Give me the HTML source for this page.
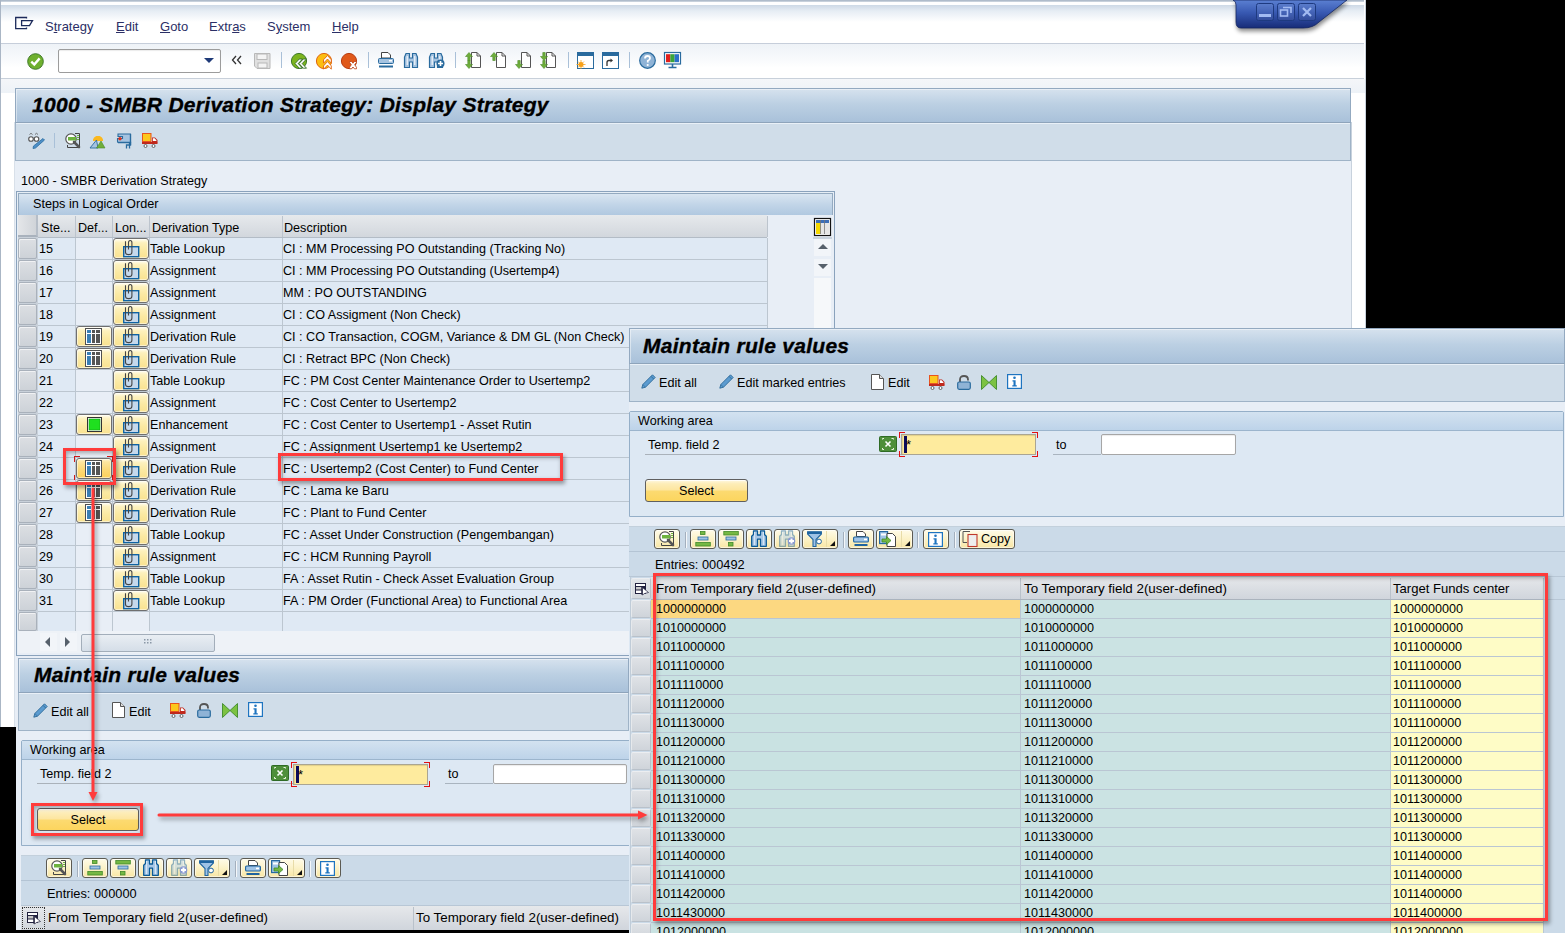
<!DOCTYPE html><html><head><meta charset="utf-8"><title>SAP</title><style>
*{box-sizing:border-box;margin:0;padding:0}
html,body{width:1565px;height:933px;overflow:hidden;background:#000}
body{position:relative;font-family:"Liberation Sans",sans-serif;font-size:12.6px;color:#000}
.a{position:absolute}
.t{position:absolute;white-space:nowrap;line-height:1}
svg{position:absolute;overflow:visible}
.ttl{font-weight:bold;font-style:italic;font-size:21px;letter-spacing:0.28px;-webkit-text-stroke:0.35px #000}
.sep{position:absolute;width:1px;background:#a9c0d8}
.ybtn{position:absolute;border:1px solid #a8996a;border-radius:2px;background:linear-gradient(#fdf4c4,#f9e08e 60%,#f5d36a)}
.rh{position:absolute;background:linear-gradient(90deg,#dfe2e6,#cfd4da);border-right:1px solid #aeb6c0;border-bottom:1px solid #aeb6c0}
.red{position:absolute;border:3px solid #ff3b3b;box-shadow:2px 3px 4px rgba(0,0,0,.35), inset 1px 2px 4px rgba(0,0,0,.3)}
</style></head><body>
<div class="a" style="left:0;top:0;width:1366px;height:727px;background:#fff;border-left:1px solid #aab6c5;border-right:1px solid #c9d2dc"></div>
<div class="a" style="left:14px;top:122px;width:1338px;height:605px;background:#e8eef6;border-left:1px solid #d8e0e9;border-right:1px solid #c8d2dd"></div>
<div class="a" style="left:1px;top:0;width:1363px;height:44px;background:linear-gradient(#afbccb 0,#afbccb 1px,#dfe5ec 2px,#fff 2px,#fff 5px,#cdd9e6 5px,#e6edf4 11px,#fff 22px);border-bottom:1px solid #c6ceda"></div>
<svg style="left:14px;top:16px" width="20" height="14" viewBox="0 0 20 14"><path d="M12.5 2.6V1.5H1.7V12.6H12.5V11.5" fill="none" stroke="#1c2a5a" stroke-width="1.3"/><path d="M7.6 4.6H18.5L15.5 9.6H7.6Z" fill="none" stroke="#1c2a5a" stroke-width="1.3"/></svg>
<div class="t" style="left:45px;top:20px;font-size:13px;color:#2b2f66">S<u>t</u>rategy</div>
<div class="t" style="left:116px;top:20px;font-size:13px;color:#2b2f66"><u>E</u>dit</div>
<div class="t" style="left:160px;top:20px;font-size:13px;color:#2b2f66"><u>G</u>oto</div>
<div class="t" style="left:209px;top:20px;font-size:13px;color:#2b2f66">Extr<u>a</u>s</div>
<div class="t" style="left:267px;top:20px;font-size:13px;color:#2b2f66">S<u>y</u>stem</div>
<div class="t" style="left:332px;top:20px;font-size:13px;color:#2b2f66"><u>H</u>elp</div>
<svg style="left:1233px;top:0;filter:drop-shadow(1px 3px 2px rgba(0,0,0,.45))" width="120" height="34" viewBox="0 0 120 34"><defs><linearGradient id="wg" x1="0" y1="0" x2="0" y2="1"><stop offset="0" stop-color="#5b80d2"/><stop offset="0.45" stop-color="#3859b2"/><stop offset="1" stop-color="#172c78"/></linearGradient></defs><path d="M0 0H114L86 22Q80 28 70 28H8Q3 28 3 22V5Q3 1 0 0Z" fill="url(#wg)" stroke="#142660" stroke-width="0.8"/><rect x="23.5" y="3.5" width="17" height="17" rx="2" fill="rgba(255,255,255,.06)" stroke="#1e3a80"/><rect x="26" y="14" width="12" height="3" fill="#a3bbf2"/><rect x="44.5" y="3.5" width="17" height="17" rx="2" fill="rgba(255,255,255,.06)" stroke="#1e3a80"/><rect x="47.5" y="10" width="7" height="6" fill="none" stroke="#a3bbf2" stroke-width="1.6"/><path d="M50 7.5H58V13" fill="none" stroke="#a3bbf2" stroke-width="1.6"/><rect x="65.5" y="3.5" width="17" height="17" rx="2" fill="rgba(255,255,255,.06)" stroke="#1e3a80"/><path d="M70 8L78 16M78 8L70 16" stroke="#a3bbf2" stroke-width="2.2"/></svg>
<div class="a" style="left:1px;top:44px;width:1363px;height:35px;background:linear-gradient(#eef2f7,#f8fafc 45%,#fff 70%);border-bottom:1px solid #c8d0da"></div>
<div class="a" style="left:1px;top:79px;width:1363px;height:10px;background:linear-gradient(#f6f8fb,#eaf0f6)"></div>
<div class="a" style="left:1px;top:79px;width:1364px;height:14px;background:linear-gradient(#f4f6f9,#edf2f7)"></div>
<svg style="left:26.5px;top:52.5px" width="17" height="17" viewBox="0 0 17 17"><circle cx="8.5" cy="8.5" r="7.8" fill="#6fb02e" stroke="#3f7a28" stroke-width="1"/><path d="M4.3 8.6L7.3 11.6L12.6 5.4" fill="none" stroke="#fff" stroke-width="2.4"/></svg>
<div class="a" style="left:58px;top:49px;width:163px;height:24px;background:#fff;border:1px solid #9c9c9c;border-radius:2px;box-shadow:inset 0 1px 1px rgba(0,0,0,.08)"></div>
<svg style="left:204px;top:58px" width="10" height="6" viewBox="0 0 10 6"><path d="M0 0H10L5 5Z" fill="#1f3a78"/></svg>
<svg style="left:231px;top:55px" width="12" height="10" viewBox="0 0 12 10"><path d="M5 1L1.5 5L5 9M10 1L6.5 5L10 9" fill="none" stroke="#333" stroke-width="1.3"/></svg>
<svg style="left:254px;top:53px" width="17" height="16" viewBox="0 0 17 16"><path d="M0.5 0.5H16V15.5H3L0.5 13Z" fill="#e0e0e0" stroke="#b8b8b8"/><rect x="3" y="1" width="10" height="5.5" fill="#f4f4f4" stroke="#b8b8b8"/><rect x="4" y="10" width="9" height="5" fill="#f4f4f4" stroke="#b8b8b8"/></svg>
<div class="sep" style="left:281px;top:52px;height:16px"></div>
<div class="sep" style="left:368px;top:52px;height:16px"></div>
<div class="sep" style="left:455px;top:52px;height:16px"></div>
<div class="sep" style="left:568px;top:52px;height:16px"></div>
<div class="sep" style="left:629px;top:52px;height:16px"></div>
<svg style="left:290px;top:52px" width="18" height="18" viewBox="0 0 18 18"><circle cx="9" cy="9" r="7.6" fill="#7cb41e" stroke="#3f7a28" stroke-width="1"/><path d="M9.3 7L5 11.6L9.3 16.2H12.5L8.2 11.6L12.5 7Z M13.3 7L9 11.6L13.3 16.2H16.5L12.2 11.6L16.5 7Z" fill="#fff" stroke="#2f6a22" stroke-width="0.9" stroke-linejoin="round"/></svg>
<svg style="left:315px;top:52px" width="18" height="18" viewBox="0 0 18 18"><circle cx="9" cy="9" r="7.6" fill="#fcbe12" stroke="#e0650f" stroke-width="1"/><path d="M12.5 3.5L8.5 7.8V11.2L12.5 7L16.3 11.2V7.8Z M12.5 9.6L8.5 13.9V17.2L12.5 13.1L16.3 17.2V13.9Z" fill="#fff" stroke="#e0650f" stroke-width="0.9" stroke-linejoin="round"/></svg>
<svg style="left:340px;top:52px" width="18" height="18" viewBox="0 0 18 18"><circle cx="9" cy="9" r="7.6" fill="#e0591a" stroke="#b83c10" stroke-width="1"/><path d="M9.5 9.5H11.6L13 11.2L14.4 9.5H16.5V10.3L14.7 12.8L16.5 15.3V16.8H14.4L13 15L11.6 16.8H9.5V15.3L11.3 12.8L9.5 10.3Z" fill="#fff" stroke="#b83c10" stroke-width="0.8" stroke-linejoin="round"/></svg>
<svg style="left:378px;top:52px" width="16" height="16" viewBox="0 0 16 16"><path d="M3.5 0.5H10L12.5 3V6H3.5Z" fill="#fff" stroke="#444"/><rect x="0.5" y="6.5" width="15" height="5" rx="1" fill="#a5c3e0" stroke="#2a6b9e"/><rect x="11" y="8" width="3" height="1.5" fill="#fff"/><rect x="1" y="13.5" width="14" height="2" fill="#2a6b9e"/></svg>
<svg style="left:403px;top:52px" width="16" height="16" viewBox="0 0 16 16"><path d="M1.5 15.5V5L3 1.5H6.5V6H9.5V1.5H13L14.5 5V15.5H9.5V10H6.5V15.5Z" fill="#a5c3e0" stroke="#2a6b9e" stroke-width="1.2"/><path d="M4.2 4V13M11.8 4V13" stroke="#fff" stroke-width="1"/></svg>
<svg style="left:428px;top:52px" width="16" height="16" viewBox="0 0 16 16"><path d="M1.5 15.5V5L3 1.5H6.5V6H9.5V1.5H13L14.5 5V15.5H9.5V10H6.5V15.5Z" fill="#a5c3e0" stroke="#2a6b9e" stroke-width="1.2"/><path d="M4.2 4V13M11.8 4V13" stroke="#fff" stroke-width="1"/><circle cx="12.5" cy="11.5" r="4" fill="#2a6b9e"/><path d="M12.5 9V14M10 11.5H15" stroke="#fff" stroke-width="1.6"/></svg>
<svg style="left:465px;top:52px" width="17" height="17" viewBox="0 0 17 17"><path d="M6.5 0.5H12L15.5 4V15.5H6.5Z" fill="#fff" stroke="#555"/><path d="M12 0.5V4H15.5" fill="none" stroke="#555"/><path d="M4 0.5L0.5 4.5H2.8V8.5H5.2V4.5H7.5Z" fill="#6fae3a" stroke="#4b8a2a" stroke-width="0.6"/><path d="M4 16.5L0.5 12.5H2.8V8.5H5.2V12.5H7.5Z" fill="#6fae3a" stroke="#4b8a2a" stroke-width="0.6"/></svg>
<svg style="left:490px;top:52px" width="17" height="17" viewBox="0 0 17 17"><path d="M6.5 0.5H12L15.5 4V15.5H6.5Z" fill="#fff" stroke="#555"/><path d="M12 0.5V4H15.5" fill="none" stroke="#555"/><path d="M4 0.5L0.5 4.5H2.8V8.5H5.2V4.5H7.5Z" fill="#6fae3a" stroke="#4b8a2a" stroke-width="0.6"/></svg>
<svg style="left:515px;top:52px" width="17" height="17" viewBox="0 0 17 17"><path d="M6.5 0.5H12L15.5 4V15.5H6.5Z" fill="#fff" stroke="#555"/><path d="M12 0.5V4H15.5" fill="none" stroke="#555"/><path d="M4 16.5L0.5 12.5H2.8V8.5H5.2V12.5H7.5Z" fill="#6fae3a" stroke="#4b8a2a" stroke-width="0.6"/></svg>
<svg style="left:540px;top:52px" width="17" height="17" viewBox="0 0 17 17"><path d="M6.5 0.5H12L15.5 4V15.5H6.5Z" fill="#fff" stroke="#555"/><path d="M12 0.5V4H15.5" fill="none" stroke="#555"/><path d="M4 8.5L0.5 4.5H2.8V0.5H5.2V4.5H7.5Z" fill="#6fae3a" stroke="#4b8a2a" stroke-width="0.6"/><path d="M4 16.5L0.5 12.5H2.8V8.5H5.2V12.5H7.5Z" fill="#6fae3a" stroke="#4b8a2a" stroke-width="0.6"/></svg>
<svg style="left:577px;top:52px" width="17" height="17" viewBox="0 0 17 17"><rect x="0.5" y="0.5" width="16" height="16" fill="#fff" stroke="#2a6b9e"/><rect x="0.5" y="0.5" width="16" height="3.5" fill="#2a6b9e"/><circle cx="4" cy="12.5" r="2.5" fill="#f7a21b"/><path d="M4 8V17M-0.5 12.5H8.5M1 9.5L7 15.5M7 9.5L1 15.5" stroke="#f7a21b" stroke-width="0.8"/><path d="M16.5 6V16.5H9" fill="none" stroke="#2a6b9e"/></svg>
<svg style="left:602px;top:52px" width="17" height="17" viewBox="0 0 17 17"><rect x="0.5" y="0.5" width="16" height="16" fill="#fff" stroke="#2a6b9e"/><rect x="0.5" y="0.5" width="16" height="3.5" fill="#2a6b9e"/><path d="M5 14V10.5Q5 8.5 7 8.5H9" fill="none" stroke="#333" stroke-width="1.3"/><path d="M8.5 6.5L11 8.5L8.5 10.5Z" fill="#333"/></svg>
<svg style="left:639px;top:52px" width="17" height="17" viewBox="0 0 17 17"><circle cx="8.5" cy="8.5" r="7.8" fill="#8fb3d6" stroke="#2a6b9e" stroke-width="1.2"/><path d="M6 6.5Q6 4 8.5 4Q11 4 11 6.3Q11 7.8 8.8 8.8V10.5" fill="none" stroke="#fff" stroke-width="1.8"/><circle cx="8.7" cy="13" r="1.1" fill="#fff"/></svg>
<svg style="left:664px;top:52px" width="17" height="17" viewBox="0 0 17 17"><rect x="0.5" y="0.5" width="16" height="11.5" fill="#fff" stroke="#2a6b9e" stroke-width="1.2"/><rect x="2" y="2.2" width="4.3" height="8" fill="#e0201c"/><rect x="6.3" y="2.2" width="4.3" height="8" fill="#3aa43a"/><rect x="10.6" y="2.2" width="4.4" height="8" fill="#2a6fc8"/><path d="M8.5 12V15M4.5 15.5H12.5" stroke="#2a6b9e" stroke-width="1.6"/></svg>
<div class="a" style="left:15px;top:88px;width:1336px;height:35px;border:1px solid #93a9c0;border-bottom:1px solid #8ea4bb;background:linear-gradient(#d6e2ee,#bcd0e3 45%,#a9c1da);box-shadow:inset 1px 1px 0 rgba(255,255,255,.45)"></div>
<div class="t ttl" style="left:32px;top:94.22px">1000 - SMBR Derivation Strategy: Display Strategy</div>
<div class="a" style="left:15px;top:123px;width:1336px;height:38px;border:1px solid #9fb3c7;border-top:0;background:#d0dde9;box-shadow:inset 0 1px 0 #e9f0f7"></div>
<svg style="left:28px;top:133px" width="17" height="16" viewBox="0 0 17 16"><circle cx="3" cy="6" r="2.3" fill="#fff" stroke="#555" stroke-width="1.1"/><circle cx="8.5" cy="6" r="2.3" fill="#fff" stroke="#555" stroke-width="1.1"/><path d="M1.5 1.5L3 0.3L4.5 1.5M7 1.5L8.5 0.3L10 1.5" fill="none" stroke="#555" stroke-width="0.8"/><path d="M15 5.5L16.5 7L7.5 15L5 15.5L5.5 13Z" fill="#4d8fc8" stroke="#2a6b9e" stroke-width="0.8"/></svg>
<div class="sep" style="left:54px;top:133px;height:15px"></div>
<svg style="left:65px;top:133px" width="16" height="16" viewBox="0 0 16 16"><path d="M10 0.5H14.5V14.5H2.5V12" fill="none" stroke="#444"/><circle cx="6" cy="6" r="5.2" fill="#fff" stroke="#555" stroke-width="1.2"/><rect x="3" y="4" width="8" height="3.5" fill="#6db33f"/><path d="M12 2.5H14M12 4.5H14M12 6.5H14" stroke="#6db33f"/><path d="M9 9L14 14" stroke="#555" stroke-width="2.6" stroke-linecap="round"/></svg>
<svg style="left:90px;top:133px" width="16" height="16" viewBox="0 0 16 16"><path d="M3 8A5 5 0 0 1 13 8Z" fill="#fbb81f"/><path d="M3 8A5 5 0 0 1 13 8" fill="#fbb81f"/><path d="M0 15L6.5 7L8 15Z" fill="#a5c3e0" stroke="#2a6b9e" stroke-width="0.9"/><path d="M6.5 15L11 8L15 15Z" fill="#6fae3a" stroke="#4b8a2a" stroke-width="0.6"/></svg>
<svg style="left:117px;top:133px" width="15" height="16" viewBox="0 0 15 16"><path d="M1 1H13.5V9.5H1.5Q0.5 9.5 0.5 8.5V5.5H5.5V3.5H1Z" fill="#a5c3e0" stroke="#2a6b9e" stroke-width="1.1"/><path d="M1 9.5H13.5V12H9.5V15.5M12.5 9.5V15.5" fill="none" stroke="#2a6b9e" stroke-width="1.3"/><circle cx="3" cy="5.8" r="1.7" fill="#d9321e"/><path d="M13.5 1V12" stroke="#2a6b9e" stroke-width="1.3"/></svg>
<svg style="left:142px;top:133px" width="16" height="15" viewBox="0 0 16 15"><rect x="0.5" y="0.5" width="8.5" height="8" fill="#fcc81e" stroke="#e8541e" stroke-width="1"/><path d="M0 9.5H15.5V7L13 4.5H10V9.5" fill="#c0281c"/><path d="M10.8 5.3H12.6L14.4 7.2V8H10.8Z" fill="#fff"/><circle cx="3.5" cy="13" r="1.5" fill="#fff" stroke="#555" stroke-width="0.9"/><circle cx="11.5" cy="13" r="1.5" fill="#fff" stroke="#555" stroke-width="0.9"/><path d="M0 9H15.5V11H0Z" fill="#c0281c"/></svg>
<div class="t" style="left:21px;top:175px;font-size:12.6px">1000 - SMBR Derivation Strategy</div>
<div class="a" style="left:16px;top:191px;width:819px;height:465px;border:1px solid #8aa2bc;box-shadow:inset 1px 1px 0 #e6eef6"></div>
<div class="a" style="left:18px;top:193px;width:815px;height:22px;border:1px solid #94aac0;border-bottom:0;background:linear-gradient(#d9e5f1,#c2d5e8 50%,#b0c8e0)"></div>
<div class="t" style="left:33px;top:198.25px;font-size:12.7px;">Steps in Logical Order</div>
<div class="a" style="left:18px;top:215px;width:815px;height:440px;background:#e8eef6"></div>
<div class="a" style="left:18px;top:215px;width:749px;height:23px;background:linear-gradient(#e6e9ec,#d2d7dd);border-bottom:1px solid #b3bcc6"></div>
<div class="a" style="left:18px;top:215px;width:20px;height:22px;background:linear-gradient(90deg,#e4e6e9,#d0d4d9);border-right:2px solid #b6bec8;border-bottom:2px solid #a9b2bd"></div>
<div class="a" style="left:75px;top:216px;width:1px;height:21px;background:#bcc4cd"></div>
<div class="a" style="left:112px;top:216px;width:1px;height:21px;background:#bcc4cd"></div>
<div class="a" style="left:149px;top:216px;width:1px;height:21px;background:#bcc4cd"></div>
<div class="a" style="left:282px;top:216px;width:1px;height:21px;background:#bcc4cd"></div>
<div class="a" style="left:767px;top:216px;width:1px;height:21px;background:#bcc4cd"></div>
<div class="t" style="left:41px;top:222.33px;font-size:12.6px;">Ste...</div>
<div class="t" style="left:78px;top:222.33px;font-size:12.6px;">Def...</div>
<div class="t" style="left:115px;top:222.33px;font-size:12.6px;">Lon...</div>
<div class="t" style="left:152px;top:222.33px;font-size:12.6px;">Derivation Type</div>
<div class="t" style="left:284px;top:222.33px;font-size:12.6px;">Description</div>
<div class="a" style="left:18px;top:237px;width:20px;height:23px;background:#c9d1da"></div>
<div class="a" style="left:18px;top:238px;width:19px;height:21px;background:linear-gradient(#dcdfe3,#cdd2d8);border:1px solid #a9b1bb;border-radius:2px;box-shadow:inset 1px 1px 0 rgba(255,255,255,.6)"></div>
<div class="a" style="left:38px;top:238px;width:37px;height:22px;background:#dfe9f4;border-bottom:1px solid #bcc6d0"></div>
<div class="a" style="left:75px;top:238px;width:74px;height:22px;background:#e8eef6;border-left:1px solid #bcc6d0;border-bottom:1px solid #bcc6d0"></div>
<div class="a" style="left:112px;top:238px;width:1px;height:22px;background:#bcc6d0"></div>
<div class="a" style="left:149px;top:238px;width:618px;height:22px;background:#dfe9f4;border-left:1px solid #bcc6d0;border-bottom:1px solid #bcc6d0"></div>
<div class="a" style="left:282px;top:238px;width:1px;height:22px;background:#bcc6d0"></div>
<div class="a" style="left:767px;top:238px;width:1px;height:22px;background:#bcc6d0"></div>
<div class="t" style="left:39px;top:242.83px;font-size:12.6px;">15</div>
<div class="a" style="left:113px;top:238px;width:36px;height:21px;border:1px solid #6f6f6f;border-radius:3px;background:linear-gradient(#fffdf0 0,#fdf1bd 20%,#fbe9a2 60%,#f9e291);box-shadow:inset 0 0 0 1px rgba(255,255,255,.5)"></div>
<svg style="left:123px;top:240px" width="16" height="17" viewBox="0 0 16 17"><rect x="0.7" y="6.7" width="15" height="10" fill="#c5d9ec" stroke="#0f63a3" stroke-width="1.4"/><path d="M2.5 1.3V12.2Q2.5 14.6 5.7 14.6Q8.9 14.6 8.9 12.2V2.6Q8.9 0.5 7.2 0.5Q5.5 0.5 5.5 2.6V9.5" fill="none" stroke="#454545" stroke-width="1.1"/></svg>
<div class="t" style="left:150px;top:242.83px;font-size:12.6px;">Table Lookup</div>
<div class="t" style="left:283px;top:242.83px;font-size:12.6px;">CI : MM Processing PO Outstanding (Tracking No)</div>
<div class="a" style="left:18px;top:259px;width:20px;height:23px;background:#c9d1da"></div>
<div class="a" style="left:18px;top:260px;width:19px;height:21px;background:linear-gradient(#dcdfe3,#cdd2d8);border:1px solid #a9b1bb;border-radius:2px;box-shadow:inset 1px 1px 0 rgba(255,255,255,.6)"></div>
<div class="a" style="left:38px;top:260px;width:37px;height:22px;background:#dfe9f4;border-bottom:1px solid #bcc6d0"></div>
<div class="a" style="left:75px;top:260px;width:74px;height:22px;background:#e8eef6;border-left:1px solid #bcc6d0;border-bottom:1px solid #bcc6d0"></div>
<div class="a" style="left:112px;top:260px;width:1px;height:22px;background:#bcc6d0"></div>
<div class="a" style="left:149px;top:260px;width:618px;height:22px;background:#dfe9f4;border-left:1px solid #bcc6d0;border-bottom:1px solid #bcc6d0"></div>
<div class="a" style="left:282px;top:260px;width:1px;height:22px;background:#bcc6d0"></div>
<div class="a" style="left:767px;top:260px;width:1px;height:22px;background:#bcc6d0"></div>
<div class="t" style="left:39px;top:264.83px;font-size:12.6px;">16</div>
<div class="a" style="left:113px;top:260px;width:36px;height:21px;border:1px solid #6f6f6f;border-radius:3px;background:linear-gradient(#fffdf0 0,#fdf1bd 20%,#fbe9a2 60%,#f9e291);box-shadow:inset 0 0 0 1px rgba(255,255,255,.5)"></div>
<svg style="left:123px;top:262px" width="16" height="17" viewBox="0 0 16 17"><rect x="0.7" y="6.7" width="15" height="10" fill="#c5d9ec" stroke="#0f63a3" stroke-width="1.4"/><path d="M2.5 1.3V12.2Q2.5 14.6 5.7 14.6Q8.9 14.6 8.9 12.2V2.6Q8.9 0.5 7.2 0.5Q5.5 0.5 5.5 2.6V9.5" fill="none" stroke="#454545" stroke-width="1.1"/></svg>
<div class="t" style="left:150px;top:264.83px;font-size:12.6px;">Assignment</div>
<div class="t" style="left:283px;top:264.83px;font-size:12.6px;">CI : MM Processing PO Outstanding (Usertemp4)</div>
<div class="a" style="left:18px;top:281px;width:20px;height:23px;background:#c9d1da"></div>
<div class="a" style="left:18px;top:282px;width:19px;height:21px;background:linear-gradient(#dcdfe3,#cdd2d8);border:1px solid #a9b1bb;border-radius:2px;box-shadow:inset 1px 1px 0 rgba(255,255,255,.6)"></div>
<div class="a" style="left:38px;top:282px;width:37px;height:22px;background:#dfe9f4;border-bottom:1px solid #bcc6d0"></div>
<div class="a" style="left:75px;top:282px;width:74px;height:22px;background:#e8eef6;border-left:1px solid #bcc6d0;border-bottom:1px solid #bcc6d0"></div>
<div class="a" style="left:112px;top:282px;width:1px;height:22px;background:#bcc6d0"></div>
<div class="a" style="left:149px;top:282px;width:618px;height:22px;background:#dfe9f4;border-left:1px solid #bcc6d0;border-bottom:1px solid #bcc6d0"></div>
<div class="a" style="left:282px;top:282px;width:1px;height:22px;background:#bcc6d0"></div>
<div class="a" style="left:767px;top:282px;width:1px;height:22px;background:#bcc6d0"></div>
<div class="t" style="left:39px;top:286.83px;font-size:12.6px;">17</div>
<div class="a" style="left:113px;top:282px;width:36px;height:21px;border:1px solid #6f6f6f;border-radius:3px;background:linear-gradient(#fffdf0 0,#fdf1bd 20%,#fbe9a2 60%,#f9e291);box-shadow:inset 0 0 0 1px rgba(255,255,255,.5)"></div>
<svg style="left:123px;top:284px" width="16" height="17" viewBox="0 0 16 17"><rect x="0.7" y="6.7" width="15" height="10" fill="#c5d9ec" stroke="#0f63a3" stroke-width="1.4"/><path d="M2.5 1.3V12.2Q2.5 14.6 5.7 14.6Q8.9 14.6 8.9 12.2V2.6Q8.9 0.5 7.2 0.5Q5.5 0.5 5.5 2.6V9.5" fill="none" stroke="#454545" stroke-width="1.1"/></svg>
<div class="t" style="left:150px;top:286.83px;font-size:12.6px;">Assignment</div>
<div class="t" style="left:283px;top:286.83px;font-size:12.6px;">MM : PO OUTSTANDING</div>
<div class="a" style="left:18px;top:303px;width:20px;height:23px;background:#c9d1da"></div>
<div class="a" style="left:18px;top:304px;width:19px;height:21px;background:linear-gradient(#dcdfe3,#cdd2d8);border:1px solid #a9b1bb;border-radius:2px;box-shadow:inset 1px 1px 0 rgba(255,255,255,.6)"></div>
<div class="a" style="left:38px;top:304px;width:37px;height:22px;background:#dfe9f4;border-bottom:1px solid #bcc6d0"></div>
<div class="a" style="left:75px;top:304px;width:74px;height:22px;background:#e8eef6;border-left:1px solid #bcc6d0;border-bottom:1px solid #bcc6d0"></div>
<div class="a" style="left:112px;top:304px;width:1px;height:22px;background:#bcc6d0"></div>
<div class="a" style="left:149px;top:304px;width:618px;height:22px;background:#dfe9f4;border-left:1px solid #bcc6d0;border-bottom:1px solid #bcc6d0"></div>
<div class="a" style="left:282px;top:304px;width:1px;height:22px;background:#bcc6d0"></div>
<div class="a" style="left:767px;top:304px;width:1px;height:22px;background:#bcc6d0"></div>
<div class="t" style="left:39px;top:308.83px;font-size:12.6px;">18</div>
<div class="a" style="left:113px;top:304px;width:36px;height:21px;border:1px solid #6f6f6f;border-radius:3px;background:linear-gradient(#fffdf0 0,#fdf1bd 20%,#fbe9a2 60%,#f9e291);box-shadow:inset 0 0 0 1px rgba(255,255,255,.5)"></div>
<svg style="left:123px;top:306px" width="16" height="17" viewBox="0 0 16 17"><rect x="0.7" y="6.7" width="15" height="10" fill="#c5d9ec" stroke="#0f63a3" stroke-width="1.4"/><path d="M2.5 1.3V12.2Q2.5 14.6 5.7 14.6Q8.9 14.6 8.9 12.2V2.6Q8.9 0.5 7.2 0.5Q5.5 0.5 5.5 2.6V9.5" fill="none" stroke="#454545" stroke-width="1.1"/></svg>
<div class="t" style="left:150px;top:308.83px;font-size:12.6px;">Assignment</div>
<div class="t" style="left:283px;top:308.83px;font-size:12.6px;">CI : CO Assigment (Non Check)</div>
<div class="a" style="left:18px;top:325px;width:20px;height:23px;background:#c9d1da"></div>
<div class="a" style="left:18px;top:326px;width:19px;height:21px;background:linear-gradient(#dcdfe3,#cdd2d8);border:1px solid #a9b1bb;border-radius:2px;box-shadow:inset 1px 1px 0 rgba(255,255,255,.6)"></div>
<div class="a" style="left:38px;top:326px;width:37px;height:22px;background:#dfe9f4;border-bottom:1px solid #bcc6d0"></div>
<div class="a" style="left:75px;top:326px;width:74px;height:22px;background:#e8eef6;border-left:1px solid #bcc6d0;border-bottom:1px solid #bcc6d0"></div>
<div class="a" style="left:112px;top:326px;width:1px;height:22px;background:#bcc6d0"></div>
<div class="a" style="left:149px;top:326px;width:618px;height:22px;background:#dfe9f4;border-left:1px solid #bcc6d0;border-bottom:1px solid #bcc6d0"></div>
<div class="a" style="left:282px;top:326px;width:1px;height:22px;background:#bcc6d0"></div>
<div class="a" style="left:767px;top:326px;width:1px;height:22px;background:#bcc6d0"></div>
<div class="t" style="left:39px;top:330.83px;font-size:12.6px;">19</div>
<div class="a" style="left:113px;top:326px;width:36px;height:21px;border:1px solid #6f6f6f;border-radius:3px;background:linear-gradient(#fffdf0 0,#fdf1bd 20%,#fbe9a2 60%,#f9e291);box-shadow:inset 0 0 0 1px rgba(255,255,255,.5)"></div>
<svg style="left:123px;top:328px" width="16" height="17" viewBox="0 0 16 17"><rect x="0.7" y="6.7" width="15" height="10" fill="#c5d9ec" stroke="#0f63a3" stroke-width="1.4"/><path d="M2.5 1.3V12.2Q2.5 14.6 5.7 14.6Q8.9 14.6 8.9 12.2V2.6Q8.9 0.5 7.2 0.5Q5.5 0.5 5.5 2.6V9.5" fill="none" stroke="#454545" stroke-width="1.1"/></svg>
<div class="a" style="left:76px;top:326px;width:36px;height:21px;border:1px solid #6f6f6f;border-radius:3px;background:linear-gradient(#fffdf0 0,#fdf1bd 20%,#fbe9a2 60%,#f9e291);box-shadow:inset 0 0 0 1px rgba(255,255,255,.5)"></div>
<svg style="left:85px;top:328px" width="17" height="17" viewBox="0 0 17 17" shape-rendering="crispEdges"><rect x="0" y="0" width="17" height="17" fill="#4f4f4f"/><rect x="1" y="1" width="15" height="15" fill="#fff"/><rect x="2" y="2" width="4" height="3" fill="#3a7fb5"/><rect x="7" y="2" width="3" height="3" fill="#555"/><rect x="11" y="2" width="4" height="3" fill="#555"/><rect x="2" y="6" width="4" height="9" fill="#3a7fb5"/><rect x="7" y="6" width="3" height="9" fill="#555"/><rect x="11" y="6" width="4" height="9" fill="#555"/></svg>
<div class="t" style="left:150px;top:330.83px;font-size:12.6px;">Derivation Rule</div>
<div class="t" style="left:283px;top:330.83px;font-size:12.6px;">CI : CO Transaction, COGM, Variance &amp; DM GL (Non Check)</div>
<div class="a" style="left:18px;top:347px;width:20px;height:23px;background:#c9d1da"></div>
<div class="a" style="left:18px;top:348px;width:19px;height:21px;background:linear-gradient(#dcdfe3,#cdd2d8);border:1px solid #a9b1bb;border-radius:2px;box-shadow:inset 1px 1px 0 rgba(255,255,255,.6)"></div>
<div class="a" style="left:38px;top:348px;width:37px;height:22px;background:#dfe9f4;border-bottom:1px solid #bcc6d0"></div>
<div class="a" style="left:75px;top:348px;width:74px;height:22px;background:#e8eef6;border-left:1px solid #bcc6d0;border-bottom:1px solid #bcc6d0"></div>
<div class="a" style="left:112px;top:348px;width:1px;height:22px;background:#bcc6d0"></div>
<div class="a" style="left:149px;top:348px;width:618px;height:22px;background:#dfe9f4;border-left:1px solid #bcc6d0;border-bottom:1px solid #bcc6d0"></div>
<div class="a" style="left:282px;top:348px;width:1px;height:22px;background:#bcc6d0"></div>
<div class="a" style="left:767px;top:348px;width:1px;height:22px;background:#bcc6d0"></div>
<div class="t" style="left:39px;top:352.83px;font-size:12.6px;">20</div>
<div class="a" style="left:113px;top:348px;width:36px;height:21px;border:1px solid #6f6f6f;border-radius:3px;background:linear-gradient(#fffdf0 0,#fdf1bd 20%,#fbe9a2 60%,#f9e291);box-shadow:inset 0 0 0 1px rgba(255,255,255,.5)"></div>
<svg style="left:123px;top:350px" width="16" height="17" viewBox="0 0 16 17"><rect x="0.7" y="6.7" width="15" height="10" fill="#c5d9ec" stroke="#0f63a3" stroke-width="1.4"/><path d="M2.5 1.3V12.2Q2.5 14.6 5.7 14.6Q8.9 14.6 8.9 12.2V2.6Q8.9 0.5 7.2 0.5Q5.5 0.5 5.5 2.6V9.5" fill="none" stroke="#454545" stroke-width="1.1"/></svg>
<div class="a" style="left:76px;top:348px;width:36px;height:21px;border:1px solid #6f6f6f;border-radius:3px;background:linear-gradient(#fffdf0 0,#fdf1bd 20%,#fbe9a2 60%,#f9e291);box-shadow:inset 0 0 0 1px rgba(255,255,255,.5)"></div>
<svg style="left:85px;top:350px" width="17" height="17" viewBox="0 0 17 17" shape-rendering="crispEdges"><rect x="0" y="0" width="17" height="17" fill="#4f4f4f"/><rect x="1" y="1" width="15" height="15" fill="#fff"/><rect x="2" y="2" width="4" height="3" fill="#3a7fb5"/><rect x="7" y="2" width="3" height="3" fill="#555"/><rect x="11" y="2" width="4" height="3" fill="#555"/><rect x="2" y="6" width="4" height="9" fill="#3a7fb5"/><rect x="7" y="6" width="3" height="9" fill="#555"/><rect x="11" y="6" width="4" height="9" fill="#555"/></svg>
<div class="t" style="left:150px;top:352.83px;font-size:12.6px;">Derivation Rule</div>
<div class="t" style="left:283px;top:352.83px;font-size:12.6px;">CI : Retract BPC (Non Check)</div>
<div class="a" style="left:18px;top:369px;width:20px;height:23px;background:#c9d1da"></div>
<div class="a" style="left:18px;top:370px;width:19px;height:21px;background:linear-gradient(#dcdfe3,#cdd2d8);border:1px solid #a9b1bb;border-radius:2px;box-shadow:inset 1px 1px 0 rgba(255,255,255,.6)"></div>
<div class="a" style="left:38px;top:370px;width:37px;height:22px;background:#dfe9f4;border-bottom:1px solid #bcc6d0"></div>
<div class="a" style="left:75px;top:370px;width:74px;height:22px;background:#e8eef6;border-left:1px solid #bcc6d0;border-bottom:1px solid #bcc6d0"></div>
<div class="a" style="left:112px;top:370px;width:1px;height:22px;background:#bcc6d0"></div>
<div class="a" style="left:149px;top:370px;width:618px;height:22px;background:#dfe9f4;border-left:1px solid #bcc6d0;border-bottom:1px solid #bcc6d0"></div>
<div class="a" style="left:282px;top:370px;width:1px;height:22px;background:#bcc6d0"></div>
<div class="a" style="left:767px;top:370px;width:1px;height:22px;background:#bcc6d0"></div>
<div class="t" style="left:39px;top:374.83px;font-size:12.6px;">21</div>
<div class="a" style="left:113px;top:370px;width:36px;height:21px;border:1px solid #6f6f6f;border-radius:3px;background:linear-gradient(#fffdf0 0,#fdf1bd 20%,#fbe9a2 60%,#f9e291);box-shadow:inset 0 0 0 1px rgba(255,255,255,.5)"></div>
<svg style="left:123px;top:372px" width="16" height="17" viewBox="0 0 16 17"><rect x="0.7" y="6.7" width="15" height="10" fill="#c5d9ec" stroke="#0f63a3" stroke-width="1.4"/><path d="M2.5 1.3V12.2Q2.5 14.6 5.7 14.6Q8.9 14.6 8.9 12.2V2.6Q8.9 0.5 7.2 0.5Q5.5 0.5 5.5 2.6V9.5" fill="none" stroke="#454545" stroke-width="1.1"/></svg>
<div class="t" style="left:150px;top:374.83px;font-size:12.6px;">Table Lookup</div>
<div class="t" style="left:283px;top:374.83px;font-size:12.6px;">FC : PM Cost Center Maintenance Order to Usertemp2</div>
<div class="a" style="left:18px;top:391px;width:20px;height:23px;background:#c9d1da"></div>
<div class="a" style="left:18px;top:392px;width:19px;height:21px;background:linear-gradient(#dcdfe3,#cdd2d8);border:1px solid #a9b1bb;border-radius:2px;box-shadow:inset 1px 1px 0 rgba(255,255,255,.6)"></div>
<div class="a" style="left:38px;top:392px;width:37px;height:22px;background:#dfe9f4;border-bottom:1px solid #bcc6d0"></div>
<div class="a" style="left:75px;top:392px;width:74px;height:22px;background:#e8eef6;border-left:1px solid #bcc6d0;border-bottom:1px solid #bcc6d0"></div>
<div class="a" style="left:112px;top:392px;width:1px;height:22px;background:#bcc6d0"></div>
<div class="a" style="left:149px;top:392px;width:618px;height:22px;background:#dfe9f4;border-left:1px solid #bcc6d0;border-bottom:1px solid #bcc6d0"></div>
<div class="a" style="left:282px;top:392px;width:1px;height:22px;background:#bcc6d0"></div>
<div class="a" style="left:767px;top:392px;width:1px;height:22px;background:#bcc6d0"></div>
<div class="t" style="left:39px;top:396.83px;font-size:12.6px;">22</div>
<div class="a" style="left:113px;top:392px;width:36px;height:21px;border:1px solid #6f6f6f;border-radius:3px;background:linear-gradient(#fffdf0 0,#fdf1bd 20%,#fbe9a2 60%,#f9e291);box-shadow:inset 0 0 0 1px rgba(255,255,255,.5)"></div>
<svg style="left:123px;top:394px" width="16" height="17" viewBox="0 0 16 17"><rect x="0.7" y="6.7" width="15" height="10" fill="#c5d9ec" stroke="#0f63a3" stroke-width="1.4"/><path d="M2.5 1.3V12.2Q2.5 14.6 5.7 14.6Q8.9 14.6 8.9 12.2V2.6Q8.9 0.5 7.2 0.5Q5.5 0.5 5.5 2.6V9.5" fill="none" stroke="#454545" stroke-width="1.1"/></svg>
<div class="t" style="left:150px;top:396.83px;font-size:12.6px;">Assignment</div>
<div class="t" style="left:283px;top:396.83px;font-size:12.6px;">FC : Cost Center to Usertemp2</div>
<div class="a" style="left:18px;top:413px;width:20px;height:23px;background:#c9d1da"></div>
<div class="a" style="left:18px;top:414px;width:19px;height:21px;background:linear-gradient(#dcdfe3,#cdd2d8);border:1px solid #a9b1bb;border-radius:2px;box-shadow:inset 1px 1px 0 rgba(255,255,255,.6)"></div>
<div class="a" style="left:38px;top:414px;width:37px;height:22px;background:#dfe9f4;border-bottom:1px solid #bcc6d0"></div>
<div class="a" style="left:75px;top:414px;width:74px;height:22px;background:#e8eef6;border-left:1px solid #bcc6d0;border-bottom:1px solid #bcc6d0"></div>
<div class="a" style="left:112px;top:414px;width:1px;height:22px;background:#bcc6d0"></div>
<div class="a" style="left:149px;top:414px;width:618px;height:22px;background:#dfe9f4;border-left:1px solid #bcc6d0;border-bottom:1px solid #bcc6d0"></div>
<div class="a" style="left:282px;top:414px;width:1px;height:22px;background:#bcc6d0"></div>
<div class="a" style="left:767px;top:414px;width:1px;height:22px;background:#bcc6d0"></div>
<div class="t" style="left:39px;top:418.83px;font-size:12.6px;">23</div>
<div class="a" style="left:113px;top:414px;width:36px;height:21px;border:1px solid #6f6f6f;border-radius:3px;background:linear-gradient(#fffdf0 0,#fdf1bd 20%,#fbe9a2 60%,#f9e291);box-shadow:inset 0 0 0 1px rgba(255,255,255,.5)"></div>
<svg style="left:123px;top:416px" width="16" height="17" viewBox="0 0 16 17"><rect x="0.7" y="6.7" width="15" height="10" fill="#c5d9ec" stroke="#0f63a3" stroke-width="1.4"/><path d="M2.5 1.3V12.2Q2.5 14.6 5.7 14.6Q8.9 14.6 8.9 12.2V2.6Q8.9 0.5 7.2 0.5Q5.5 0.5 5.5 2.6V9.5" fill="none" stroke="#454545" stroke-width="1.1"/></svg>
<div class="a" style="left:76px;top:414px;width:36px;height:21px;border:1px solid #6f6f6f;border-radius:3px;background:linear-gradient(#fffdf0 0,#fdf1bd 20%,#fbe9a2 60%,#f9e291);box-shadow:inset 0 0 0 1px rgba(255,255,255,.5)"></div>
<svg style="left:87px;top:417px" width="15" height="15" viewBox="0 0 15 15"><rect x="0.5" y="0.5" width="14" height="14" fill="#fff" stroke="#333"/><rect x="2" y="2" width="11" height="11" fill="#1fe01f" stroke="#119911" stroke-width="0.6"/></svg>
<div class="t" style="left:150px;top:418.83px;font-size:12.6px;">Enhancement</div>
<div class="t" style="left:283px;top:418.83px;font-size:12.6px;">FC : Cost Center to Usertemp1 - Asset Rutin</div>
<div class="a" style="left:18px;top:435px;width:20px;height:23px;background:#c9d1da"></div>
<div class="a" style="left:18px;top:436px;width:19px;height:21px;background:linear-gradient(#dcdfe3,#cdd2d8);border:1px solid #a9b1bb;border-radius:2px;box-shadow:inset 1px 1px 0 rgba(255,255,255,.6)"></div>
<div class="a" style="left:38px;top:436px;width:37px;height:22px;background:#dfe9f4;border-bottom:1px solid #bcc6d0"></div>
<div class="a" style="left:75px;top:436px;width:74px;height:22px;background:#e8eef6;border-left:1px solid #bcc6d0;border-bottom:1px solid #bcc6d0"></div>
<div class="a" style="left:112px;top:436px;width:1px;height:22px;background:#bcc6d0"></div>
<div class="a" style="left:149px;top:436px;width:618px;height:22px;background:#dfe9f4;border-left:1px solid #bcc6d0;border-bottom:1px solid #bcc6d0"></div>
<div class="a" style="left:282px;top:436px;width:1px;height:22px;background:#bcc6d0"></div>
<div class="a" style="left:767px;top:436px;width:1px;height:22px;background:#bcc6d0"></div>
<div class="t" style="left:39px;top:440.83px;font-size:12.6px;">24</div>
<div class="a" style="left:113px;top:436px;width:36px;height:21px;border:1px solid #6f6f6f;border-radius:3px;background:linear-gradient(#fffdf0 0,#fdf1bd 20%,#fbe9a2 60%,#f9e291);box-shadow:inset 0 0 0 1px rgba(255,255,255,.5)"></div>
<svg style="left:123px;top:438px" width="16" height="17" viewBox="0 0 16 17"><rect x="0.7" y="6.7" width="15" height="10" fill="#c5d9ec" stroke="#0f63a3" stroke-width="1.4"/><path d="M2.5 1.3V12.2Q2.5 14.6 5.7 14.6Q8.9 14.6 8.9 12.2V2.6Q8.9 0.5 7.2 0.5Q5.5 0.5 5.5 2.6V9.5" fill="none" stroke="#454545" stroke-width="1.1"/></svg>
<div class="t" style="left:150px;top:440.83px;font-size:12.6px;">Assignment</div>
<div class="t" style="left:283px;top:440.83px;font-size:12.6px;">FC : Assignment Usertemp1 ke Usertemp2</div>
<div class="a" style="left:18px;top:457px;width:20px;height:23px;background:#c9d1da"></div>
<div class="a" style="left:18px;top:458px;width:19px;height:21px;background:linear-gradient(#dcdfe3,#cdd2d8);border:1px solid #a9b1bb;border-radius:2px;box-shadow:inset 1px 1px 0 rgba(255,255,255,.6)"></div>
<div class="a" style="left:38px;top:458px;width:37px;height:22px;background:#dfe9f4;border-bottom:1px solid #bcc6d0"></div>
<div class="a" style="left:75px;top:458px;width:74px;height:22px;background:#e8eef6;border-left:1px solid #bcc6d0;border-bottom:1px solid #bcc6d0"></div>
<div class="a" style="left:112px;top:458px;width:1px;height:22px;background:#bcc6d0"></div>
<div class="a" style="left:149px;top:458px;width:618px;height:22px;background:#dfe9f4;border-left:1px solid #bcc6d0;border-bottom:1px solid #bcc6d0"></div>
<div class="a" style="left:282px;top:458px;width:1px;height:22px;background:#bcc6d0"></div>
<div class="a" style="left:767px;top:458px;width:1px;height:22px;background:#bcc6d0"></div>
<div class="t" style="left:39px;top:462.83px;font-size:12.6px;">25</div>
<div class="a" style="left:113px;top:458px;width:36px;height:21px;border:1px solid #6f6f6f;border-radius:3px;background:linear-gradient(#fffdf0 0,#fdf1bd 20%,#fbe9a2 60%,#f9e291);box-shadow:inset 0 0 0 1px rgba(255,255,255,.5)"></div>
<svg style="left:123px;top:460px" width="16" height="17" viewBox="0 0 16 17"><rect x="0.7" y="6.7" width="15" height="10" fill="#c5d9ec" stroke="#0f63a3" stroke-width="1.4"/><path d="M2.5 1.3V12.2Q2.5 14.6 5.7 14.6Q8.9 14.6 8.9 12.2V2.6Q8.9 0.5 7.2 0.5Q5.5 0.5 5.5 2.6V9.5" fill="none" stroke="#454545" stroke-width="1.1"/></svg>
<div class="a" style="left:76px;top:458px;width:36px;height:21px;border:1px solid #6f6f6f;border-radius:3px;background:linear-gradient(#fff3cf 0,#fde6a0 15%,#fcd978 55%,#fbd05a);box-shadow:inset 0 0 0 1px rgba(255,255,255,.5)"></div>
<div class="a" style="left:74px;top:456px;width:6px;height:6px;border:solid #d01818;border-width:1.5px 0 0 1.5px"></div>
<div class="a" style="left:107px;top:456px;width:6px;height:6px;border:solid #d01818;border-width:1.5px 1.5px 0 0"></div>
<div class="a" style="left:74px;top:475px;width:6px;height:6px;border:solid #d01818;border-width:0 0 1.5px 1.5px"></div>
<div class="a" style="left:107px;top:475px;width:6px;height:6px;border:solid #d01818;border-width:0 1.5px 1.5px 0"></div>
<svg style="left:85px;top:460px" width="17" height="17" viewBox="0 0 17 17" shape-rendering="crispEdges"><rect x="0" y="0" width="17" height="17" fill="#4f4f4f"/><rect x="1" y="1" width="15" height="15" fill="#fff"/><rect x="2" y="2" width="4" height="3" fill="#3a7fb5"/><rect x="7" y="2" width="3" height="3" fill="#555"/><rect x="11" y="2" width="4" height="3" fill="#555"/><rect x="2" y="6" width="4" height="9" fill="#3a7fb5"/><rect x="7" y="6" width="3" height="9" fill="#555"/><rect x="11" y="6" width="4" height="9" fill="#555"/></svg>
<div class="t" style="left:150px;top:462.83px;font-size:12.6px;">Derivation Rule</div>
<div class="t" style="left:283px;top:462.83px;font-size:12.6px;">FC : Usertemp2 (Cost Center) to Fund Center</div>
<div class="a" style="left:18px;top:479px;width:20px;height:23px;background:#c9d1da"></div>
<div class="a" style="left:18px;top:480px;width:19px;height:21px;background:linear-gradient(#dcdfe3,#cdd2d8);border:1px solid #a9b1bb;border-radius:2px;box-shadow:inset 1px 1px 0 rgba(255,255,255,.6)"></div>
<div class="a" style="left:38px;top:480px;width:37px;height:22px;background:#dfe9f4;border-bottom:1px solid #bcc6d0"></div>
<div class="a" style="left:75px;top:480px;width:74px;height:22px;background:#e8eef6;border-left:1px solid #bcc6d0;border-bottom:1px solid #bcc6d0"></div>
<div class="a" style="left:112px;top:480px;width:1px;height:22px;background:#bcc6d0"></div>
<div class="a" style="left:149px;top:480px;width:618px;height:22px;background:#dfe9f4;border-left:1px solid #bcc6d0;border-bottom:1px solid #bcc6d0"></div>
<div class="a" style="left:282px;top:480px;width:1px;height:22px;background:#bcc6d0"></div>
<div class="a" style="left:767px;top:480px;width:1px;height:22px;background:#bcc6d0"></div>
<div class="t" style="left:39px;top:484.83px;font-size:12.6px;">26</div>
<div class="a" style="left:113px;top:480px;width:36px;height:21px;border:1px solid #6f6f6f;border-radius:3px;background:linear-gradient(#fffdf0 0,#fdf1bd 20%,#fbe9a2 60%,#f9e291);box-shadow:inset 0 0 0 1px rgba(255,255,255,.5)"></div>
<svg style="left:123px;top:482px" width="16" height="17" viewBox="0 0 16 17"><rect x="0.7" y="6.7" width="15" height="10" fill="#c5d9ec" stroke="#0f63a3" stroke-width="1.4"/><path d="M2.5 1.3V12.2Q2.5 14.6 5.7 14.6Q8.9 14.6 8.9 12.2V2.6Q8.9 0.5 7.2 0.5Q5.5 0.5 5.5 2.6V9.5" fill="none" stroke="#454545" stroke-width="1.1"/></svg>
<div class="a" style="left:76px;top:480px;width:36px;height:21px;border:1px solid #6f6f6f;border-radius:3px;background:linear-gradient(#fffdf0 0,#fdf1bd 20%,#fbe9a2 60%,#f9e291);box-shadow:inset 0 0 0 1px rgba(255,255,255,.5)"></div>
<svg style="left:85px;top:482px" width="17" height="17" viewBox="0 0 17 17" shape-rendering="crispEdges"><rect x="0" y="0" width="17" height="17" fill="#4f4f4f"/><rect x="1" y="1" width="15" height="15" fill="#fff"/><rect x="2" y="2" width="4" height="3" fill="#3a7fb5"/><rect x="7" y="2" width="3" height="3" fill="#555"/><rect x="11" y="2" width="4" height="3" fill="#555"/><rect x="2" y="6" width="4" height="9" fill="#3a7fb5"/><rect x="7" y="6" width="3" height="9" fill="#555"/><rect x="11" y="6" width="4" height="9" fill="#555"/></svg>
<div class="t" style="left:150px;top:484.83px;font-size:12.6px;">Derivation Rule</div>
<div class="t" style="left:283px;top:484.83px;font-size:12.6px;">FC : Lama ke Baru</div>
<div class="a" style="left:18px;top:501px;width:20px;height:23px;background:#c9d1da"></div>
<div class="a" style="left:18px;top:502px;width:19px;height:21px;background:linear-gradient(#dcdfe3,#cdd2d8);border:1px solid #a9b1bb;border-radius:2px;box-shadow:inset 1px 1px 0 rgba(255,255,255,.6)"></div>
<div class="a" style="left:38px;top:502px;width:37px;height:22px;background:#dfe9f4;border-bottom:1px solid #bcc6d0"></div>
<div class="a" style="left:75px;top:502px;width:74px;height:22px;background:#e8eef6;border-left:1px solid #bcc6d0;border-bottom:1px solid #bcc6d0"></div>
<div class="a" style="left:112px;top:502px;width:1px;height:22px;background:#bcc6d0"></div>
<div class="a" style="left:149px;top:502px;width:618px;height:22px;background:#dfe9f4;border-left:1px solid #bcc6d0;border-bottom:1px solid #bcc6d0"></div>
<div class="a" style="left:282px;top:502px;width:1px;height:22px;background:#bcc6d0"></div>
<div class="a" style="left:767px;top:502px;width:1px;height:22px;background:#bcc6d0"></div>
<div class="t" style="left:39px;top:506.83px;font-size:12.6px;">27</div>
<div class="a" style="left:113px;top:502px;width:36px;height:21px;border:1px solid #6f6f6f;border-radius:3px;background:linear-gradient(#fffdf0 0,#fdf1bd 20%,#fbe9a2 60%,#f9e291);box-shadow:inset 0 0 0 1px rgba(255,255,255,.5)"></div>
<svg style="left:123px;top:504px" width="16" height="17" viewBox="0 0 16 17"><rect x="0.7" y="6.7" width="15" height="10" fill="#c5d9ec" stroke="#0f63a3" stroke-width="1.4"/><path d="M2.5 1.3V12.2Q2.5 14.6 5.7 14.6Q8.9 14.6 8.9 12.2V2.6Q8.9 0.5 7.2 0.5Q5.5 0.5 5.5 2.6V9.5" fill="none" stroke="#454545" stroke-width="1.1"/></svg>
<div class="a" style="left:76px;top:502px;width:36px;height:21px;border:1px solid #6f6f6f;border-radius:3px;background:linear-gradient(#fffdf0 0,#fdf1bd 20%,#fbe9a2 60%,#f9e291);box-shadow:inset 0 0 0 1px rgba(255,255,255,.5)"></div>
<svg style="left:85px;top:504px" width="17" height="17" viewBox="0 0 17 17" shape-rendering="crispEdges"><rect x="0" y="0" width="17" height="17" fill="#4f4f4f"/><rect x="1" y="1" width="15" height="15" fill="#fff"/><rect x="2" y="2" width="4" height="3" fill="#3a7fb5"/><rect x="7" y="2" width="3" height="3" fill="#555"/><rect x="11" y="2" width="4" height="3" fill="#555"/><rect x="2" y="6" width="4" height="9" fill="#3a7fb5"/><rect x="7" y="6" width="3" height="9" fill="#555"/><rect x="11" y="6" width="4" height="9" fill="#555"/></svg>
<div class="t" style="left:150px;top:506.83px;font-size:12.6px;">Derivation Rule</div>
<div class="t" style="left:283px;top:506.83px;font-size:12.6px;">FC : Plant to Fund Center</div>
<div class="a" style="left:18px;top:523px;width:20px;height:23px;background:#c9d1da"></div>
<div class="a" style="left:18px;top:524px;width:19px;height:21px;background:linear-gradient(#dcdfe3,#cdd2d8);border:1px solid #a9b1bb;border-radius:2px;box-shadow:inset 1px 1px 0 rgba(255,255,255,.6)"></div>
<div class="a" style="left:38px;top:524px;width:37px;height:22px;background:#dfe9f4;border-bottom:1px solid #bcc6d0"></div>
<div class="a" style="left:75px;top:524px;width:74px;height:22px;background:#e8eef6;border-left:1px solid #bcc6d0;border-bottom:1px solid #bcc6d0"></div>
<div class="a" style="left:112px;top:524px;width:1px;height:22px;background:#bcc6d0"></div>
<div class="a" style="left:149px;top:524px;width:618px;height:22px;background:#dfe9f4;border-left:1px solid #bcc6d0;border-bottom:1px solid #bcc6d0"></div>
<div class="a" style="left:282px;top:524px;width:1px;height:22px;background:#bcc6d0"></div>
<div class="a" style="left:767px;top:524px;width:1px;height:22px;background:#bcc6d0"></div>
<div class="t" style="left:39px;top:528.83px;font-size:12.6px;">28</div>
<div class="a" style="left:113px;top:524px;width:36px;height:21px;border:1px solid #6f6f6f;border-radius:3px;background:linear-gradient(#fffdf0 0,#fdf1bd 20%,#fbe9a2 60%,#f9e291);box-shadow:inset 0 0 0 1px rgba(255,255,255,.5)"></div>
<svg style="left:123px;top:526px" width="16" height="17" viewBox="0 0 16 17"><rect x="0.7" y="6.7" width="15" height="10" fill="#c5d9ec" stroke="#0f63a3" stroke-width="1.4"/><path d="M2.5 1.3V12.2Q2.5 14.6 5.7 14.6Q8.9 14.6 8.9 12.2V2.6Q8.9 0.5 7.2 0.5Q5.5 0.5 5.5 2.6V9.5" fill="none" stroke="#454545" stroke-width="1.1"/></svg>
<div class="t" style="left:150px;top:528.83px;font-size:12.6px;">Table Lookup</div>
<div class="t" style="left:283px;top:528.83px;font-size:12.6px;">FC : Asset Under Construction (Pengembangan)</div>
<div class="a" style="left:18px;top:545px;width:20px;height:23px;background:#c9d1da"></div>
<div class="a" style="left:18px;top:546px;width:19px;height:21px;background:linear-gradient(#dcdfe3,#cdd2d8);border:1px solid #a9b1bb;border-radius:2px;box-shadow:inset 1px 1px 0 rgba(255,255,255,.6)"></div>
<div class="a" style="left:38px;top:546px;width:37px;height:22px;background:#dfe9f4;border-bottom:1px solid #bcc6d0"></div>
<div class="a" style="left:75px;top:546px;width:74px;height:22px;background:#e8eef6;border-left:1px solid #bcc6d0;border-bottom:1px solid #bcc6d0"></div>
<div class="a" style="left:112px;top:546px;width:1px;height:22px;background:#bcc6d0"></div>
<div class="a" style="left:149px;top:546px;width:618px;height:22px;background:#dfe9f4;border-left:1px solid #bcc6d0;border-bottom:1px solid #bcc6d0"></div>
<div class="a" style="left:282px;top:546px;width:1px;height:22px;background:#bcc6d0"></div>
<div class="a" style="left:767px;top:546px;width:1px;height:22px;background:#bcc6d0"></div>
<div class="t" style="left:39px;top:550.83px;font-size:12.6px;">29</div>
<div class="a" style="left:113px;top:546px;width:36px;height:21px;border:1px solid #6f6f6f;border-radius:3px;background:linear-gradient(#fffdf0 0,#fdf1bd 20%,#fbe9a2 60%,#f9e291);box-shadow:inset 0 0 0 1px rgba(255,255,255,.5)"></div>
<svg style="left:123px;top:548px" width="16" height="17" viewBox="0 0 16 17"><rect x="0.7" y="6.7" width="15" height="10" fill="#c5d9ec" stroke="#0f63a3" stroke-width="1.4"/><path d="M2.5 1.3V12.2Q2.5 14.6 5.7 14.6Q8.9 14.6 8.9 12.2V2.6Q8.9 0.5 7.2 0.5Q5.5 0.5 5.5 2.6V9.5" fill="none" stroke="#454545" stroke-width="1.1"/></svg>
<div class="t" style="left:150px;top:550.83px;font-size:12.6px;">Assignment</div>
<div class="t" style="left:283px;top:550.83px;font-size:12.6px;">FC : HCM Running Payroll</div>
<div class="a" style="left:18px;top:567px;width:20px;height:23px;background:#c9d1da"></div>
<div class="a" style="left:18px;top:568px;width:19px;height:21px;background:linear-gradient(#dcdfe3,#cdd2d8);border:1px solid #a9b1bb;border-radius:2px;box-shadow:inset 1px 1px 0 rgba(255,255,255,.6)"></div>
<div class="a" style="left:38px;top:568px;width:37px;height:22px;background:#dfe9f4;border-bottom:1px solid #bcc6d0"></div>
<div class="a" style="left:75px;top:568px;width:74px;height:22px;background:#e8eef6;border-left:1px solid #bcc6d0;border-bottom:1px solid #bcc6d0"></div>
<div class="a" style="left:112px;top:568px;width:1px;height:22px;background:#bcc6d0"></div>
<div class="a" style="left:149px;top:568px;width:618px;height:22px;background:#dfe9f4;border-left:1px solid #bcc6d0;border-bottom:1px solid #bcc6d0"></div>
<div class="a" style="left:282px;top:568px;width:1px;height:22px;background:#bcc6d0"></div>
<div class="a" style="left:767px;top:568px;width:1px;height:22px;background:#bcc6d0"></div>
<div class="t" style="left:39px;top:572.83px;font-size:12.6px;">30</div>
<div class="a" style="left:113px;top:568px;width:36px;height:21px;border:1px solid #6f6f6f;border-radius:3px;background:linear-gradient(#fffdf0 0,#fdf1bd 20%,#fbe9a2 60%,#f9e291);box-shadow:inset 0 0 0 1px rgba(255,255,255,.5)"></div>
<svg style="left:123px;top:570px" width="16" height="17" viewBox="0 0 16 17"><rect x="0.7" y="6.7" width="15" height="10" fill="#c5d9ec" stroke="#0f63a3" stroke-width="1.4"/><path d="M2.5 1.3V12.2Q2.5 14.6 5.7 14.6Q8.9 14.6 8.9 12.2V2.6Q8.9 0.5 7.2 0.5Q5.5 0.5 5.5 2.6V9.5" fill="none" stroke="#454545" stroke-width="1.1"/></svg>
<div class="t" style="left:150px;top:572.83px;font-size:12.6px;">Table Lookup</div>
<div class="t" style="left:283px;top:572.83px;font-size:12.6px;">FA : Asset Rutin - Check Asset Evaluation Group</div>
<div class="a" style="left:18px;top:589px;width:20px;height:23px;background:#c9d1da"></div>
<div class="a" style="left:18px;top:590px;width:19px;height:21px;background:linear-gradient(#dcdfe3,#cdd2d8);border:1px solid #a9b1bb;border-radius:2px;box-shadow:inset 1px 1px 0 rgba(255,255,255,.6)"></div>
<div class="a" style="left:38px;top:590px;width:37px;height:22px;background:#dfe9f4;border-bottom:1px solid #bcc6d0"></div>
<div class="a" style="left:75px;top:590px;width:74px;height:22px;background:#e8eef6;border-left:1px solid #bcc6d0;border-bottom:1px solid #bcc6d0"></div>
<div class="a" style="left:112px;top:590px;width:1px;height:22px;background:#bcc6d0"></div>
<div class="a" style="left:149px;top:590px;width:618px;height:22px;background:#dfe9f4;border-left:1px solid #bcc6d0;border-bottom:1px solid #bcc6d0"></div>
<div class="a" style="left:282px;top:590px;width:1px;height:22px;background:#bcc6d0"></div>
<div class="a" style="left:767px;top:590px;width:1px;height:22px;background:#bcc6d0"></div>
<div class="t" style="left:39px;top:594.83px;font-size:12.6px;">31</div>
<div class="a" style="left:113px;top:590px;width:36px;height:21px;border:1px solid #6f6f6f;border-radius:3px;background:linear-gradient(#fffdf0 0,#fdf1bd 20%,#fbe9a2 60%,#f9e291);box-shadow:inset 0 0 0 1px rgba(255,255,255,.5)"></div>
<svg style="left:123px;top:592px" width="16" height="17" viewBox="0 0 16 17"><rect x="0.7" y="6.7" width="15" height="10" fill="#c5d9ec" stroke="#0f63a3" stroke-width="1.4"/><path d="M2.5 1.3V12.2Q2.5 14.6 5.7 14.6Q8.9 14.6 8.9 12.2V2.6Q8.9 0.5 7.2 0.5Q5.5 0.5 5.5 2.6V9.5" fill="none" stroke="#454545" stroke-width="1.1"/></svg>
<div class="t" style="left:150px;top:594.83px;font-size:12.6px;">Table Lookup</div>
<div class="t" style="left:283px;top:594.83px;font-size:12.6px;">FA : PM Order (Functional Area) to Functional Area</div>
<div class="a" style="left:18px;top:611px;width:20px;height:21px;background:#c9d1da"></div>
<div class="a" style="left:18px;top:612px;width:19px;height:19px;background:linear-gradient(#dcdfe3,#cdd2d8);border:1px solid #a9b1bb;border-radius:2px;box-shadow:inset 1px 1px 0 rgba(255,255,255,.6)"></div>
<div class="a" style="left:38px;top:612px;width:37px;height:20px;background:#dfe9f4;border-bottom:0"></div>
<div class="a" style="left:75px;top:612px;width:74px;height:20px;background:#e8eef6;border-left:1px solid #bcc6d0;border-bottom:0"></div>
<div class="a" style="left:112px;top:612px;width:1px;height:20px;background:#bcc6d0"></div>
<div class="a" style="left:149px;top:612px;width:618px;height:20px;background:#dfe9f4;border-left:1px solid #bcc6d0;border-bottom:0"></div>
<div class="a" style="left:282px;top:612px;width:1px;height:20px;background:#bcc6d0"></div>
<div class="a" style="left:767px;top:612px;width:1px;height:20px;background:#bcc6d0"></div>
<div class="a" style="left:18px;top:631px;width:749px;height:22px;background:#eef2f7"></div>
<div class="a" style="left:40px;top:633px;width:17px;height:18px;background:#f2f5f9"></div>
<div class="a" style="left:60px;top:633px;width:17px;height:18px;background:#f2f5f9"></div>
<svg style="left:45px;top:637px" width="6" height="10" viewBox="0 0 6 10"><path d="M5 0V10L0 5Z" fill="#56606b"/></svg>
<svg style="left:65px;top:637px" width="6" height="10" viewBox="0 0 6 10"><path d="M0 0V10L5 5Z" fill="#56606b"/></svg>
<div class="a" style="left:81px;top:634px;width:134px;height:18px;border:1px solid #a3aeba;border-radius:2px;background:linear-gradient(#e9eef3,#d5dee8)"></div>
<svg style="left:144px;top:638px" width="8" height="8" viewBox="0 0 8 8"><g fill="#8a97a6"><rect x="0" y="1" width="1.5" height="1.5"/><rect x="3" y="1" width="1.5" height="1.5"/><rect x="6" y="1" width="1.5" height="1.5"/><rect x="0" y="4" width="1.5" height="1.5"/><rect x="3" y="4" width="1.5" height="1.5"/><rect x="6" y="4" width="1.5" height="1.5"/></g></svg>
<svg style="left:814px;top:218px" width="17" height="18" viewBox="0 0 17 18"><rect x="0.5" y="0.5" width="16" height="17" fill="#fff" stroke="#111" stroke-width="1.2"/><rect x="2" y="2" width="13" height="3" fill="#3d6fb8"/><rect x="2" y="5" width="4.5" height="11" fill="#f5d800"/><rect x="7" y="5" width="3.5" height="11" fill="#e6e6e6"/><rect x="11" y="5" width="4" height="11" fill="#e6e6e6"/><path d="M6.5 2V16M10.5 2V16" stroke="#777" stroke-width="0.8"/></svg>
<div class="a" style="left:813px;top:237px;width:19px;height:2px;background:#c9d3de"></div>
<div class="a" style="left:814px;top:239px;width:17px;height:17px;background:#f2f5f9"></div>
<div class="a" style="left:814px;top:259px;width:17px;height:17px;background:#f2f5f9"></div>
<svg style="left:818px;top:244px" width="10" height="6" viewBox="0 0 10 6"><path d="M0 5H10L5 0Z" fill="#56606b"/></svg>
<svg style="left:818px;top:264px" width="10" height="6" viewBox="0 0 10 6"><path d="M0 0H10L5 5Z" fill="#56606b"/></svg>
<div class="a" style="left:814px;top:278px;width:17px;height:372px;background:#f6f8fa"></div>
<div class="a" style="left:16px;top:658px;width:2px;height:272px;background:#e8eef6"></div>
<div class="a" style="left:18px;top:658px;width:611px;height:272px;background:#e8eef6"></div>
<div class="a" style="left:18px;top:658px;width:611px;height:35px;border:1px solid #93a9c0;border-bottom:1px solid #8ea4bb;background:linear-gradient(#d6e2ee,#bcd0e3 45%,#a9c1da);box-shadow:inset 1px 1px 0 rgba(255,255,255,.45)"></div>
<div class="t ttl" style="left:34px;top:664.22px">Maintain rule values</div>
<div class="a" style="left:18px;top:693px;width:611px;height:38px;border:1px solid #9fb3c7;border-top:0;background:#d0dde9;box-shadow:inset 0 1px 0 #e9f0f7"></div>
<svg style="left:33px;top:703px" width="15" height="15" viewBox="0 0 15 15"><path d="M11.5 0.8L14.2 3.5L4.5 13.2L0.8 14.2L1.8 10.5Z" fill="#5b9bd0" stroke="#2f6b99" stroke-width="0.9"/><path d="M10 2.3L12.7 5" stroke="#2f6b99" stroke-width="0.9"/><path d="M1.8 10.5L4.5 13.2" stroke="#2f6b99" stroke-width="0.7"/></svg>
<div class="t" style="left:51px;top:705.83px;font-size:12.6px;">Edit all</div>
<svg style="left:112px;top:702px" width="13" height="16" viewBox="0 0 13 16"><path d="M0.5 0.5H8.5L12.5 4.5V15.5H0.5Z" fill="#fff" stroke="#555"/><path d="M8.5 0.5V4.5H12.5" fill="#ddd" stroke="#555"/></svg>
<div class="t" style="left:129px;top:705.83px;font-size:12.6px;">Edit</div>
<svg style="left:170px;top:703px" width="16" height="15" viewBox="0 0 16 15"><rect x="0.5" y="0.5" width="8.5" height="8" fill="#fcc81e" stroke="#e8541e" stroke-width="1"/><path d="M0 9.5H15.5V7L13 4.5H10V9.5" fill="#c0281c"/><path d="M10.8 5.3H12.6L14.4 7.2V8H10.8Z" fill="#fff"/><circle cx="3.5" cy="13" r="1.5" fill="#fff" stroke="#555" stroke-width="0.9"/><circle cx="11.5" cy="13" r="1.5" fill="#fff" stroke="#555" stroke-width="0.9"/><path d="M0 9H15.5V11H0Z" fill="#c0281c"/></svg>
<svg style="left:197px;top:703px" width="14" height="15" viewBox="0 0 14 15"><path d="M3 7V4.5Q3 1 7 1Q11 1 11 4.5V5.5" fill="none" stroke="#555" stroke-width="1.8"/><rect x="0.7" y="7" width="12.6" height="7.3" rx="1.5" fill="#8fb3d6" stroke="#2a6b9e" stroke-width="1.2"/></svg>
<svg style="left:222px;top:703px" width="16" height="15" viewBox="0 0 16 15"><path d="M0.5 0.5L8 7.5L15.5 0.5V14.5L8 7.5L0.5 14.5Z" fill="#7cc242" stroke="#3f8a2a" stroke-width="0.9"/></svg>
<svg style="left:248px;top:702px" width="15" height="15" viewBox="0 0 15 15"><rect x="0.6" y="0.6" width="13.8" height="13.8" fill="#fff" stroke="#1e74c0" stroke-width="1.2"/><circle cx="7.5" cy="3.8" r="1.3" fill="#1e74c0"/><path d="M5.5 6.3H8.6V11.3H9.8V12.5H5.3V11.3H6.5V7.5H5.5Z" fill="#1e74c0"/></svg>
<div class="a" style="left:21px;top:740px;width:610px;height:106px;border:1px solid #95afc8;background:#dde8f3;border-radius:2px 0 0 0"></div>
<div class="a" style="left:22px;top:741px;width:608px;height:19px;background:linear-gradient(#d3e2f0,#bdd3e9);border-bottom:1px solid #9cb5cd"></div>
<div class="t" style="left:30px;top:744.33px;font-size:12.6px;">Working area</div>
<div class="t" style="left:40px;top:768.33px;font-size:12.6px;">Temp. field 2</div>
<div class="a" style="left:37px;top:783px;width:256px;height:1px;background:#aab2ba"></div>
<svg style="left:271px;top:765px" width="18" height="16" viewBox="0 0 18 16"><rect x="0.5" y="0.5" width="17" height="15" rx="1" fill="#4e8f3a" stroke="#2f6b25"/><path d="M3.5 3.5V2.5H5M12.5 2.5H14.5V3.5M3.5 12V13.5H5M12.5 13.5H14.5V12" fill="none" stroke="#e9f5e0" stroke-width="1"/><path d="M6.5 5.5L11.5 10.5M11.5 5.5L6.5 10.5" stroke="#fff" stroke-width="1.6"/></svg>
<div class="a" style="left:293px;top:764px;width:135px;height:21px;background:#feeb9e;border:1px solid #aaa592;box-shadow:inset 1px 1px 1px rgba(0,0,0,.12)"></div>
<div class="a" style="left:296px;top:766px;width:3px;height:17px;background:#0a0a5a"></div>
<div class="t" style="left:298px;top:768px;font-size:13px">*</div>
<div class="a" style="left:291px;top:762px;width:6px;height:6px;border:solid #e01010;border-width:1.5px 0 0 1.5px"></div>
<div class="a" style="left:424px;top:762px;width:6px;height:6px;border:solid #e01010;border-width:1.5px 1.5px 0 0"></div>
<div class="a" style="left:291px;top:781px;width:6px;height:6px;border:solid #e01010;border-width:0 0 1.5px 1.5px"></div>
<div class="a" style="left:424px;top:781px;width:6px;height:6px;border:solid #e01010;border-width:0 1.5px 1.5px 0"></div>
<div class="t" style="left:448px;top:768.33px;font-size:12.6px;">to</div>
<div class="a" style="left:445px;top:783px;width:48px;height:1px;background:#a9b4bf"></div>
<div class="a" style="left:493px;top:764px;width:134px;height:20px;background:#fff;border:1px solid #a6a6a6;border-radius:2px;box-shadow:inset 0 1px 1px rgba(0,0,0,.08)"></div>
<div class="a" style="left:37px;top:808px;width:102px;height:23px;border:1px solid #5f5f5f;border-radius:3px;background:linear-gradient(#fff8e2 0,#fdedb8 18%,#fde6a0 46%,#fcda70 54%,#fcd55e 100%);box-shadow:inset 0 1px 0 rgba(255,255,255,.8)"></div>
<div class="t" style="left:37px;top:813.7px;width:102px;text-align:center;font-size:12.6px">Select</div>
<div class="a" style="left:21px;top:855px;width:608px;height:26px;background:#cbdae8;border-top:1px solid #c3d0dc;border-bottom:1px solid #b4c4d4"></div>
<div class="a" style="left:46px;top:858px;width:26px;height:20px;border:1px solid #5c5a52;border-radius:3px;background:linear-gradient(#fffbe8,#fcf2c8 50%,#f8e6a4);box-shadow:inset 0 0 0 1px rgba(255,255,255,.55)"></div>
<svg style="left:51px;top:860px" width="16" height="16" viewBox="0 0 16 16"><path d="M10 0.5H14.5V14.5H2.5V12" fill="none" stroke="#444"/><circle cx="6" cy="6" r="5.2" fill="#fff" stroke="#555" stroke-width="1.2"/><rect x="3" y="4" width="8" height="3.5" fill="#6db33f"/><path d="M12 2.5H14M12 4.5H14M12 6.5H14" stroke="#6db33f"/><path d="M9 9L14 14" stroke="#555" stroke-width="2.6" stroke-linecap="round"/></svg>
<div class="a" style="left:77px;top:861px;width:2px;height:16px;border-left:1px solid #a3afbd;border-right:1px solid #f4f7fa"></div>
<div class="a" style="left:82px;top:858px;width:26px;height:20px;border:1px solid #5c5a52;border-radius:3px;background:linear-gradient(#fffbe8,#fcf2c8 50%,#f8e6a4);box-shadow:inset 0 0 0 1px rgba(255,255,255,.55)"></div>
<svg style="left:87px;top:860px" width="16" height="16" viewBox="0 0 16 16"><rect x="5.5" y="0.5" width="4.5" height="3" fill="#76b843" stroke="#3f8a2a" stroke-width="0.8"/><rect x="3" y="6" width="10" height="3" fill="#9fc3e6" stroke="#2a6b9e" stroke-width="0.8"/><rect x="0.8" y="11.5" width="14.5" height="3.5" fill="#76b843" stroke="#3f8a2a" stroke-width="0.8"/></svg>
<div class="a" style="left:110px;top:858px;width:26px;height:20px;border:1px solid #5c5a52;border-radius:3px;background:linear-gradient(#fffbe8,#fcf2c8 50%,#f8e6a4);box-shadow:inset 0 0 0 1px rgba(255,255,255,.55)"></div>
<svg style="left:115px;top:860px" width="16" height="16" viewBox="0 0 16 16"><rect x="0.8" y="0.5" width="14.5" height="3.5" fill="#76b843" stroke="#3f8a2a" stroke-width="0.8"/><rect x="3" y="6" width="10" height="3" fill="#9fc3e6" stroke="#2a6b9e" stroke-width="0.8"/><rect x="5.5" y="11.5" width="4.5" height="3.5" fill="#76b843" stroke="#3f8a2a" stroke-width="0.8"/></svg>
<div class="a" style="left:138px;top:858px;width:26px;height:20px;border:1px solid #5c5a52;border-radius:3px;background:linear-gradient(#fffbe8,#fcf2c8 50%,#f8e6a4);box-shadow:inset 0 0 0 1px rgba(255,255,255,.55)"></div>
<svg style="left:143px;top:859px" width="17" height="17" viewBox="0 0 17 17"><path d="M2.5 0.8H6.5V5H9.5V0.8H13.5V4.5L15.3 6.3V16.3H9.5V9.2H6.5V16.3H0.7V6.3L2.5 4.5Z" fill="#a9c8e6" stroke="#0a5a96" stroke-width="1.3" stroke-linejoin="round"/><path d="M3.5 2V15M12.5 2V15" stroke="#d6e6f5" stroke-width="1"/></svg>
<div class="a" style="left:166px;top:858px;width:26px;height:20px;border:1px solid #5c5a52;border-radius:3px;background:linear-gradient(#fffbe8,#fcf2c8 50%,#f8e6a4);box-shadow:inset 0 0 0 1px rgba(255,255,255,.55)"></div>
<svg style="left:171px;top:859px" width="17" height="17" viewBox="0 0 17 17"><g opacity="0.45"><path d="M2.5 0.8H6.5V5H9.5V0.8H13.5V4.5L15.3 6.3V16.3H9.5V9.2H6.5V16.3H0.7V6.3L2.5 4.5Z" fill="#a9c8e6" stroke="#0a5a96" stroke-width="1.3" stroke-linejoin="round"/><path d="M3.5 2V15M12.5 2V15" stroke="#d6e6f5" stroke-width="1"/></g><circle cx="12.5" cy="11" r="3.8" fill="#8a9ad0"/><path d="M12.5 8.5V13.5M10 11H15" stroke="#fff" stroke-width="2"/></svg>
<div class="a" style="left:194px;top:858px;width:36px;height:20px;border:1px solid #5c5a52;border-radius:3px;background:linear-gradient(#fffbe8,#fcf2c8 50%,#f8e6a4);box-shadow:inset 0 0 0 1px rgba(255,255,255,.55)"></div>
<svg style="left:199px;top:860px" width="16" height="16" viewBox="0 0 16 16"><path d="M0.6 0.8H14.4V3L9 8.5V15.5H6V8.5L0.6 3Z" fill="#9fc3e6" stroke="#1f64a0" stroke-width="1.1"/><path d="M0.6 0.8H14.4V3H0.6Z" fill="#1f64a0"/><circle cx="12" cy="10.5" r="2.4" fill="#fff" stroke="#1f64a0" stroke-width="1"/></svg>
<div class="a" style="left:218px;top:860px;width:1px;height:16px;background:#e8dca8"></div>
<svg style="left:222px;top:870px" width="5" height="5" viewBox="0 0 5 5"><path d="M5 0V5H0Z" fill="#111"/></svg>
<div class="a" style="left:235px;top:861px;width:2px;height:16px;border-left:1px solid #a3afbd;border-right:1px solid #f4f7fa"></div>
<div class="a" style="left:240px;top:858px;width:26px;height:20px;border:1px solid #5c5a52;border-radius:3px;background:linear-gradient(#fffbe8,#fcf2c8 50%,#f8e6a4);box-shadow:inset 0 0 0 1px rgba(255,255,255,.55)"></div>
<svg style="left:245px;top:860px" width="16" height="16" viewBox="0 0 16 16"><path d="M3.5 0.5H10L12.5 3V5.5H3.5Z" fill="#fff" stroke="#444"/><rect x="0.6" y="6" width="14.8" height="5" rx="1" fill="#9fc3e6" stroke="#1f64a0" stroke-width="1.1"/><rect x="11" y="7.6" width="3" height="1.6" fill="#fff"/><rect x="1.5" y="13" width="13" height="2" fill="#1f64a0"/></svg>
<div class="a" style="left:268px;top:858px;width:37px;height:20px;border:1px solid #5c5a52;border-radius:3px;background:linear-gradient(#fffbe8,#fcf2c8 50%,#f8e6a4);box-shadow:inset 0 0 0 1px rgba(255,255,255,.55)"></div>
<svg style="left:271px;top:860px" width="18" height="16" viewBox="0 0 18 16"><rect x="0.6" y="0.6" width="8" height="12" fill="#9fc3e6" stroke="#1f64a0" stroke-width="1.1"/><rect x="2" y="2.5" width="5" height="2" fill="#fff"/><path d="M8 2.5H13.5L16.5 5.5V15.5H8Z" fill="#fff" stroke="#444" stroke-width="1"/><path d="M3 8H7.5V5.5L12 9.5L7.5 13.5V11H3Z" fill="#76b843" stroke="#3f8a2a" stroke-width="0.8"/></svg>
<div class="a" style="left:293px;top:860px;width:1px;height:16px;background:#e8dca8"></div>
<svg style="left:297px;top:870px" width="5" height="5" viewBox="0 0 5 5"><path d="M5 0V5H0Z" fill="#111"/></svg>
<div class="a" style="left:309px;top:861px;width:2px;height:16px;border-left:1px solid #a3afbd;border-right:1px solid #f4f7fa"></div>
<div class="a" style="left:315px;top:858px;width:26px;height:20px;border:1px solid #5c5a52;border-radius:3px;background:linear-gradient(#fffbe8,#fcf2c8 50%,#f8e6a4);box-shadow:inset 0 0 0 1px rgba(255,255,255,.55)"></div>
<svg style="left:320px;top:861px" width="15" height="15" viewBox="0 0 15 15"><rect x="0.6" y="0.6" width="13.8" height="13.8" fill="#fff" stroke="#1e74c0" stroke-width="1.2"/><circle cx="7.5" cy="3.8" r="1.3" fill="#1e74c0"/><path d="M5.5 6.3H8.6V11.3H9.8V12.5H5.3V11.3H6.5V7.5H5.5Z" fill="#1e74c0"/></svg>
<div class="a" style="left:21px;top:881px;width:608px;height:25px;background:#cbdae8;border-bottom:1px solid #b8c7d6"></div>
<div class="t" style="left:47px;top:888.16px;font-size:12.8px;">Entries: 000000</div>
<div class="a" style="left:21px;top:906px;width:608px;height:24px;background:linear-gradient(#e6e8eb,#d0d5dc)"></div>
<div class="a" style="left:22px;top:907px;width:23px;height:22px;border:1px dotted #333;background:linear-gradient(#e6e8eb,#d3d8de)"></div>
<svg style="left:27px;top:912px" width="15" height="13" viewBox="0 0 15 13"><rect x="0" y="0" width="11" height="11" fill="#22223f"/><rect x="1" y="1" width="9" height="2" fill="#fff"/><rect x="1" y="4" width="5.5" height="2.5" fill="#c8c8c8"/><rect x="1" y="7.5" width="5.5" height="2.5" fill="#fff"/><rect x="6.5" y="4" width="1" height="8" fill="#22223f"/><path d="M7.5 4.5V12L9.5 10.5L13.5 9.5Z" fill="#fff" stroke="#22223f" stroke-width="0.7"/></svg>
<div class="a" style="left:413px;top:907px;width:1px;height:23px;background:#b9c1ca"></div>
<div class="t" style="left:48px;top:910.70px;font-size:13.35px;">From Temporary field 2(user-defined)</div>
<div class="t" style="left:416px;top:910.70px;font-size:13.35px;">To Temporary field 2(user-defined)</div>
<div class="a" style="left:629px;top:328px;width:936px;height:605px;background:#e8eef6"></div>
<div class="a" style="left:629px;top:328px;width:936px;height:36px;border:1px solid #93a9c0;border-bottom:1px solid #8ea4bb;background:linear-gradient(#d6e2ee,#bcd0e3 45%,#a9c1da);box-shadow:inset 1px 1px 0 rgba(255,255,255,.45)"></div>
<div class="t ttl" style="left:643px;top:335.22px">Maintain rule values</div>
<div class="a" style="left:629px;top:364px;width:936px;height:38px;border:1px solid #9fb3c7;border-top:0;background:#d0dde9;box-shadow:inset 0 1px 0 #e9f0f7"></div>
<svg style="left:641px;top:374px" width="15" height="15" viewBox="0 0 15 15"><path d="M11.5 0.8L14.2 3.5L4.5 13.2L0.8 14.2L1.8 10.5Z" fill="#5b9bd0" stroke="#2f6b99" stroke-width="0.9"/><path d="M10 2.3L12.7 5" stroke="#2f6b99" stroke-width="0.9"/><path d="M1.8 10.5L4.5 13.2" stroke="#2f6b99" stroke-width="0.7"/></svg>
<div class="t" style="left:659px;top:377.33px;font-size:12.6px;">Edit all</div>
<svg style="left:719px;top:374px" width="15" height="15" viewBox="0 0 15 15"><path d="M11.5 0.8L14.2 3.5L4.5 13.2L0.8 14.2L1.8 10.5Z" fill="#5b9bd0" stroke="#2f6b99" stroke-width="0.9"/><path d="M10 2.3L12.7 5" stroke="#2f6b99" stroke-width="0.9"/><path d="M1.8 10.5L4.5 13.2" stroke="#2f6b99" stroke-width="0.7"/></svg>
<div class="t" style="left:737px;top:377.33px;font-size:12.6px;">Edit marked entries</div>
<svg style="left:871px;top:374px" width="13" height="16" viewBox="0 0 13 16"><path d="M0.5 0.5H8.5L12.5 4.5V15.5H0.5Z" fill="#fff" stroke="#555"/><path d="M8.5 0.5V4.5H12.5" fill="#ddd" stroke="#555"/></svg>
<div class="t" style="left:888px;top:377.33px;font-size:12.6px;">Edit</div>
<svg style="left:929px;top:375px" width="16" height="15" viewBox="0 0 16 15"><rect x="0.5" y="0.5" width="8.5" height="8" fill="#fcc81e" stroke="#e8541e" stroke-width="1"/><path d="M0 9.5H15.5V7L13 4.5H10V9.5" fill="#c0281c"/><path d="M10.8 5.3H12.6L14.4 7.2V8H10.8Z" fill="#fff"/><circle cx="3.5" cy="13" r="1.5" fill="#fff" stroke="#555" stroke-width="0.9"/><circle cx="11.5" cy="13" r="1.5" fill="#fff" stroke="#555" stroke-width="0.9"/><path d="M0 9H15.5V11H0Z" fill="#c0281c"/></svg>
<svg style="left:957px;top:375px" width="14" height="15" viewBox="0 0 14 15"><path d="M3 7V4.5Q3 1 7 1Q11 1 11 4.5V5.5" fill="none" stroke="#555" stroke-width="1.8"/><rect x="0.7" y="7" width="12.6" height="7.3" rx="1.5" fill="#8fb3d6" stroke="#2a6b9e" stroke-width="1.2"/></svg>
<svg style="left:981px;top:375px" width="16" height="15" viewBox="0 0 16 15"><path d="M0.5 0.5L8 7.5L15.5 0.5V14.5L8 7.5L0.5 14.5Z" fill="#7cc242" stroke="#3f8a2a" stroke-width="0.9"/></svg>
<svg style="left:1007px;top:374px" width="15" height="15" viewBox="0 0 15 15"><rect x="0.6" y="0.6" width="13.8" height="13.8" fill="#fff" stroke="#1e74c0" stroke-width="1.2"/><circle cx="7.5" cy="3.8" r="1.3" fill="#1e74c0"/><path d="M5.5 6.3H8.6V11.3H9.8V12.5H5.3V11.3H6.5V7.5H5.5Z" fill="#1e74c0"/></svg>
<div class="a" style="left:629px;top:411px;width:935px;height:106px;border:1px solid #95afc8;background:#dde8f3;border-radius:2px 2px 0 0"></div>
<div class="a" style="left:630px;top:412px;width:933px;height:19px;background:linear-gradient(#d3e2f0,#bdd3e9);border-bottom:1px solid #9cb5cd"></div>
<div class="t" style="left:638px;top:415.33px;font-size:12.6px;">Working area</div>
<div class="t" style="left:648px;top:439.33px;font-size:12.6px;">Temp. field 2</div>
<div class="a" style="left:645px;top:454px;width:256px;height:1px;background:#aab2ba"></div>
<svg style="left:879px;top:436px" width="18" height="16" viewBox="0 0 18 16"><rect x="0.5" y="0.5" width="17" height="15" rx="1" fill="#4e8f3a" stroke="#2f6b25"/><path d="M3.5 3.5V2.5H5M12.5 2.5H14.5V3.5M3.5 12V13.5H5M12.5 13.5H14.5V12" fill="none" stroke="#e9f5e0" stroke-width="1"/><path d="M6.5 5.5L11.5 10.5M11.5 5.5L6.5 10.5" stroke="#fff" stroke-width="1.6"/></svg>
<div class="a" style="left:901px;top:434px;width:135px;height:21px;background:#feeb9e;border:1px solid #aaa592;box-shadow:inset 1px 1px 1px rgba(0,0,0,.12)"></div>
<div class="a" style="left:904px;top:436px;width:3px;height:17px;background:#0a0a5a"></div>
<div class="t" style="left:906px;top:438px;font-size:13px">*</div>
<div class="a" style="left:899px;top:432px;width:6px;height:6px;border:solid #e01010;border-width:1.5px 0 0 1.5px"></div>
<div class="a" style="left:1032px;top:432px;width:6px;height:6px;border:solid #e01010;border-width:1.5px 1.5px 0 0"></div>
<div class="a" style="left:899px;top:451px;width:6px;height:6px;border:solid #e01010;border-width:0 0 1.5px 1.5px"></div>
<div class="a" style="left:1032px;top:451px;width:6px;height:6px;border:solid #e01010;border-width:0 1.5px 1.5px 0"></div>
<div class="t" style="left:1056px;top:439.33px;font-size:12.6px;">to</div>
<div class="a" style="left:1053px;top:454px;width:48px;height:1px;background:#a9b4bf"></div>
<div class="a" style="left:1101px;top:434px;width:135px;height:21px;background:#fff;border:1px solid #a6a6a6;border-radius:2px;box-shadow:inset 0 1px 1px rgba(0,0,0,.08)"></div>
<div class="a" style="left:645px;top:479px;width:103px;height:23px;border:1px solid #5f5f5f;border-radius:3px;background:linear-gradient(#fff8e2 0,#fdedb8 18%,#fde6a0 46%,#fcda70 54%,#fcd55e 100%);box-shadow:inset 0 1px 0 rgba(255,255,255,.8)"></div>
<div class="t" style="left:645px;top:484.7px;width:103px;text-align:center;font-size:12.6px">Select</div>
<div class="a" style="left:629px;top:526px;width:936px;height:26px;background:#cbdae8;border-top:1px solid #c3d0dc;border-bottom:1px solid #b4c4d4"></div>
<div class="a" style="left:654px;top:529px;width:26px;height:20px;border:1px solid #5c5a52;border-radius:3px;background:linear-gradient(#fffbe8,#fcf2c8 50%,#f8e6a4);box-shadow:inset 0 0 0 1px rgba(255,255,255,.55)"></div>
<svg style="left:659px;top:531px" width="16" height="16" viewBox="0 0 16 16"><path d="M10 0.5H14.5V14.5H2.5V12" fill="none" stroke="#444"/><circle cx="6" cy="6" r="5.2" fill="#fff" stroke="#555" stroke-width="1.2"/><rect x="3" y="4" width="8" height="3.5" fill="#6db33f"/><path d="M12 2.5H14M12 4.5H14M12 6.5H14" stroke="#6db33f"/><path d="M9 9L14 14" stroke="#555" stroke-width="2.6" stroke-linecap="round"/></svg>
<div class="a" style="left:685px;top:532px;width:2px;height:16px;border-left:1px solid #a3afbd;border-right:1px solid #f4f7fa"></div>
<div class="a" style="left:690px;top:529px;width:26px;height:20px;border:1px solid #5c5a52;border-radius:3px;background:linear-gradient(#fffbe8,#fcf2c8 50%,#f8e6a4);box-shadow:inset 0 0 0 1px rgba(255,255,255,.55)"></div>
<svg style="left:695px;top:531px" width="16" height="16" viewBox="0 0 16 16"><rect x="5.5" y="0.5" width="4.5" height="3" fill="#76b843" stroke="#3f8a2a" stroke-width="0.8"/><rect x="3" y="6" width="10" height="3" fill="#9fc3e6" stroke="#2a6b9e" stroke-width="0.8"/><rect x="0.8" y="11.5" width="14.5" height="3.5" fill="#76b843" stroke="#3f8a2a" stroke-width="0.8"/></svg>
<div class="a" style="left:718px;top:529px;width:26px;height:20px;border:1px solid #5c5a52;border-radius:3px;background:linear-gradient(#fffbe8,#fcf2c8 50%,#f8e6a4);box-shadow:inset 0 0 0 1px rgba(255,255,255,.55)"></div>
<svg style="left:723px;top:531px" width="16" height="16" viewBox="0 0 16 16"><rect x="0.8" y="0.5" width="14.5" height="3.5" fill="#76b843" stroke="#3f8a2a" stroke-width="0.8"/><rect x="3" y="6" width="10" height="3" fill="#9fc3e6" stroke="#2a6b9e" stroke-width="0.8"/><rect x="5.5" y="11.5" width="4.5" height="3.5" fill="#76b843" stroke="#3f8a2a" stroke-width="0.8"/></svg>
<div class="a" style="left:746px;top:529px;width:26px;height:20px;border:1px solid #5c5a52;border-radius:3px;background:linear-gradient(#fffbe8,#fcf2c8 50%,#f8e6a4);box-shadow:inset 0 0 0 1px rgba(255,255,255,.55)"></div>
<svg style="left:751px;top:530px" width="17" height="17" viewBox="0 0 17 17"><path d="M2.5 0.8H6.5V5H9.5V0.8H13.5V4.5L15.3 6.3V16.3H9.5V9.2H6.5V16.3H0.7V6.3L2.5 4.5Z" fill="#a9c8e6" stroke="#0a5a96" stroke-width="1.3" stroke-linejoin="round"/><path d="M3.5 2V15M12.5 2V15" stroke="#d6e6f5" stroke-width="1"/></svg>
<div class="a" style="left:774px;top:529px;width:26px;height:20px;border:1px solid #5c5a52;border-radius:3px;background:linear-gradient(#fffbe8,#fcf2c8 50%,#f8e6a4);box-shadow:inset 0 0 0 1px rgba(255,255,255,.55)"></div>
<svg style="left:779px;top:530px" width="17" height="17" viewBox="0 0 17 17"><g opacity="0.45"><path d="M2.5 0.8H6.5V5H9.5V0.8H13.5V4.5L15.3 6.3V16.3H9.5V9.2H6.5V16.3H0.7V6.3L2.5 4.5Z" fill="#a9c8e6" stroke="#0a5a96" stroke-width="1.3" stroke-linejoin="round"/><path d="M3.5 2V15M12.5 2V15" stroke="#d6e6f5" stroke-width="1"/></g><circle cx="12.5" cy="11" r="3.8" fill="#8a9ad0"/><path d="M12.5 8.5V13.5M10 11H15" stroke="#fff" stroke-width="2"/></svg>
<div class="a" style="left:802px;top:529px;width:36px;height:20px;border:1px solid #5c5a52;border-radius:3px;background:linear-gradient(#fffbe8,#fcf2c8 50%,#f8e6a4);box-shadow:inset 0 0 0 1px rgba(255,255,255,.55)"></div>
<svg style="left:807px;top:531px" width="16" height="16" viewBox="0 0 16 16"><path d="M0.6 0.8H14.4V3L9 8.5V15.5H6V8.5L0.6 3Z" fill="#9fc3e6" stroke="#1f64a0" stroke-width="1.1"/><path d="M0.6 0.8H14.4V3H0.6Z" fill="#1f64a0"/><circle cx="12" cy="10.5" r="2.4" fill="#fff" stroke="#1f64a0" stroke-width="1"/></svg>
<div class="a" style="left:826px;top:531px;width:1px;height:16px;background:#e8dca8"></div>
<svg style="left:830px;top:541px" width="5" height="5" viewBox="0 0 5 5"><path d="M5 0V5H0Z" fill="#111"/></svg>
<div class="a" style="left:843px;top:532px;width:2px;height:16px;border-left:1px solid #a3afbd;border-right:1px solid #f4f7fa"></div>
<div class="a" style="left:848px;top:529px;width:26px;height:20px;border:1px solid #5c5a52;border-radius:3px;background:linear-gradient(#fffbe8,#fcf2c8 50%,#f8e6a4);box-shadow:inset 0 0 0 1px rgba(255,255,255,.55)"></div>
<svg style="left:853px;top:531px" width="16" height="16" viewBox="0 0 16 16"><path d="M3.5 0.5H10L12.5 3V5.5H3.5Z" fill="#fff" stroke="#444"/><rect x="0.6" y="6" width="14.8" height="5" rx="1" fill="#9fc3e6" stroke="#1f64a0" stroke-width="1.1"/><rect x="11" y="7.6" width="3" height="1.6" fill="#fff"/><rect x="1.5" y="13" width="13" height="2" fill="#1f64a0"/></svg>
<div class="a" style="left:876px;top:529px;width:37px;height:20px;border:1px solid #5c5a52;border-radius:3px;background:linear-gradient(#fffbe8,#fcf2c8 50%,#f8e6a4);box-shadow:inset 0 0 0 1px rgba(255,255,255,.55)"></div>
<svg style="left:879px;top:531px" width="18" height="16" viewBox="0 0 18 16"><rect x="0.6" y="0.6" width="8" height="12" fill="#9fc3e6" stroke="#1f64a0" stroke-width="1.1"/><rect x="2" y="2.5" width="5" height="2" fill="#fff"/><path d="M8 2.5H13.5L16.5 5.5V15.5H8Z" fill="#fff" stroke="#444" stroke-width="1"/><path d="M3 8H7.5V5.5L12 9.5L7.5 13.5V11H3Z" fill="#76b843" stroke="#3f8a2a" stroke-width="0.8"/></svg>
<div class="a" style="left:901px;top:531px;width:1px;height:16px;background:#e8dca8"></div>
<svg style="left:905px;top:541px" width="5" height="5" viewBox="0 0 5 5"><path d="M5 0V5H0Z" fill="#111"/></svg>
<div class="a" style="left:917px;top:532px;width:2px;height:16px;border-left:1px solid #a3afbd;border-right:1px solid #f4f7fa"></div>
<div class="a" style="left:923px;top:529px;width:26px;height:20px;border:1px solid #5c5a52;border-radius:3px;background:linear-gradient(#fffbe8,#fcf2c8 50%,#f8e6a4);box-shadow:inset 0 0 0 1px rgba(255,255,255,.55)"></div>
<svg style="left:928px;top:532px" width="15" height="15" viewBox="0 0 15 15"><rect x="0.6" y="0.6" width="13.8" height="13.8" fill="#fff" stroke="#1e74c0" stroke-width="1.2"/><circle cx="7.5" cy="3.8" r="1.3" fill="#1e74c0"/><path d="M5.5 6.3H8.6V11.3H9.8V12.5H5.3V11.3H6.5V7.5H5.5Z" fill="#1e74c0"/></svg>
<div class="a" style="left:954px;top:532px;width:2px;height:16px;border-left:1px solid #a3afbd;border-right:1px solid #f4f7fa"></div>
<div class="a" style="left:959px;top:529px;width:56px;height:20px;border:1px solid #5c5a52;border-radius:3px;background:linear-gradient(#fffbe8,#fcf2c8 50%,#f8e6a4);box-shadow:inset 0 0 0 1px rgba(255,255,255,.55)"></div>
<svg style="left:962px;top:531px" width="16" height="16" viewBox="0 0 16 16"><path d="M8 0.5H1V11.5H5" fill="none" stroke="#555" stroke-width="1"/><rect x="6" y="3.5" width="9" height="12" fill="#eee" stroke="#c0392b" stroke-width="1.1"/></svg>
<div class="t" style="left:981px;top:533.33px;font-size:12.6px;">Copy</div>
<div class="a" style="left:629px;top:552px;width:936px;height:25px;background:#cbdae8;border-bottom:1px solid #b8c7d6"></div>
<div class="t" style="left:655px;top:559.16px;font-size:12.8px;">Entries: 000492</div>
<div class="a" style="left:629px;top:577px;width:936px;height:356px;background:#cbdae8"></div>
<div class="a" style="left:1544px;top:599px;width:21px;height:1px;background:#b8c7d6"></div>
<div class="a" style="left:629px;top:577px;width:2px;height:356px;background:#dde8f3;border-right:1px solid #c0ccd8"></div>
<div class="a" style="left:631px;top:578px;width:20px;height:21px;background:linear-gradient(#e3e6e9,#d3d8dd);border:1px solid #b9c1ca;border-top-color:#eceef1;border-left-color:#e6e9ec;border-radius:2px"></div>
<svg style="left:635px;top:583px" width="15" height="13" viewBox="0 0 15 13"><rect x="0" y="0" width="11" height="11" fill="#22223f"/><rect x="1" y="1" width="9" height="2" fill="#fff"/><rect x="1" y="4" width="5.5" height="2.5" fill="#c8c8c8"/><rect x="1" y="7.5" width="5.5" height="2.5" fill="#fff"/><rect x="6.5" y="4" width="1" height="8" fill="#22223f"/><path d="M7.5 4.5V12L9.5 10.5L13.5 9.5Z" fill="#fff" stroke="#22223f" stroke-width="0.7"/></svg>
<div class="a" style="left:651px;top:577px;width:893px;height:23px;background:linear-gradient(#e6e8eb,#d0d5dc);border-bottom:1px solid #aab3bd"></div>
<div class="a" style="left:1020px;top:578px;width:1px;height:21px;background:#b9c1ca"></div>
<div class="a" style="left:1390px;top:578px;width:1px;height:21px;background:#b9c1ca"></div>
<div class="a" style="left:1543px;top:578px;width:1px;height:21px;background:#b9c1ca"></div>
<div class="t" style="left:656px;top:581.70px;font-size:13.35px;">From Temporary field 2(user-defined)</div>
<div class="t" style="left:1024px;top:581.70px;font-size:13.35px;">To Temporary field 2(user-defined)</div>
<div class="t" style="left:1393px;top:581.91px;font-size:13.1px;">Target Funds center</div>
<div class="a" style="left:631px;top:600px;width:20px;height:18px;background:linear-gradient(#dfe2e6,#cfd4da);border:1px solid #b9c1ca;border-top-color:#eceef1;border-left-color:#e6e9ec;border-radius:2px"></div>
<div class="a" style="left:651px;top:600px;width:370px;height:19px;background:#fcd881;border-bottom:1px solid #bac6d3;border-right:1px solid #bac6d3"></div>
<div class="a" style="left:1021px;top:600px;width:370px;height:19px;background:#cbe3e3;border-bottom:1px solid #bac6d3;border-right:1px solid #bac6d3"></div>
<div class="a" style="left:1391px;top:600px;width:153px;height:19px;background:#fefcc6;border-bottom:1px solid #bac6d3;border-right:1px solid #bac6d3"></div>
<div class="t" style="left:656px;top:602.83px;font-size:12.6px;">1000000000</div>
<div class="t" style="left:1024px;top:602.83px;font-size:12.6px;">1000000000</div>
<div class="t" style="left:1393px;top:602.83px;font-size:12.6px;">1000000000</div>
<div class="a" style="left:631px;top:619px;width:20px;height:18px;background:linear-gradient(#dfe2e6,#cfd4da);border:1px solid #b9c1ca;border-top-color:#eceef1;border-left-color:#e6e9ec;border-radius:2px"></div>
<div class="a" style="left:651px;top:619px;width:370px;height:19px;background:#c9e2e2;border-bottom:1px solid #bac6d3;border-right:1px solid #bac6d3"></div>
<div class="a" style="left:1021px;top:619px;width:370px;height:19px;background:#cbe3e3;border-bottom:1px solid #bac6d3;border-right:1px solid #bac6d3"></div>
<div class="a" style="left:1391px;top:619px;width:153px;height:19px;background:#fefcc6;border-bottom:1px solid #bac6d3;border-right:1px solid #bac6d3"></div>
<div class="t" style="left:656px;top:621.83px;font-size:12.6px;">1010000000</div>
<div class="t" style="left:1024px;top:621.83px;font-size:12.6px;">1010000000</div>
<div class="t" style="left:1393px;top:621.83px;font-size:12.6px;">1010000000</div>
<div class="a" style="left:631px;top:638px;width:20px;height:18px;background:linear-gradient(#dfe2e6,#cfd4da);border:1px solid #b9c1ca;border-top-color:#eceef1;border-left-color:#e6e9ec;border-radius:2px"></div>
<div class="a" style="left:651px;top:638px;width:370px;height:19px;background:#c9e2e2;border-bottom:1px solid #bac6d3;border-right:1px solid #bac6d3"></div>
<div class="a" style="left:1021px;top:638px;width:370px;height:19px;background:#cbe3e3;border-bottom:1px solid #bac6d3;border-right:1px solid #bac6d3"></div>
<div class="a" style="left:1391px;top:638px;width:153px;height:19px;background:#fefcc6;border-bottom:1px solid #bac6d3;border-right:1px solid #bac6d3"></div>
<div class="t" style="left:656px;top:640.83px;font-size:12.6px;">1011000000</div>
<div class="t" style="left:1024px;top:640.83px;font-size:12.6px;">1011000000</div>
<div class="t" style="left:1393px;top:640.83px;font-size:12.6px;">1011000000</div>
<div class="a" style="left:631px;top:657px;width:20px;height:18px;background:linear-gradient(#dfe2e6,#cfd4da);border:1px solid #b9c1ca;border-top-color:#eceef1;border-left-color:#e6e9ec;border-radius:2px"></div>
<div class="a" style="left:651px;top:657px;width:370px;height:19px;background:#c9e2e2;border-bottom:1px solid #bac6d3;border-right:1px solid #bac6d3"></div>
<div class="a" style="left:1021px;top:657px;width:370px;height:19px;background:#cbe3e3;border-bottom:1px solid #bac6d3;border-right:1px solid #bac6d3"></div>
<div class="a" style="left:1391px;top:657px;width:153px;height:19px;background:#fefcc6;border-bottom:1px solid #bac6d3;border-right:1px solid #bac6d3"></div>
<div class="t" style="left:656px;top:659.83px;font-size:12.6px;">1011100000</div>
<div class="t" style="left:1024px;top:659.83px;font-size:12.6px;">1011100000</div>
<div class="t" style="left:1393px;top:659.83px;font-size:12.6px;">1011100000</div>
<div class="a" style="left:631px;top:676px;width:20px;height:18px;background:linear-gradient(#dfe2e6,#cfd4da);border:1px solid #b9c1ca;border-top-color:#eceef1;border-left-color:#e6e9ec;border-radius:2px"></div>
<div class="a" style="left:651px;top:676px;width:370px;height:19px;background:#c9e2e2;border-bottom:1px solid #bac6d3;border-right:1px solid #bac6d3"></div>
<div class="a" style="left:1021px;top:676px;width:370px;height:19px;background:#cbe3e3;border-bottom:1px solid #bac6d3;border-right:1px solid #bac6d3"></div>
<div class="a" style="left:1391px;top:676px;width:153px;height:19px;background:#fefcc6;border-bottom:1px solid #bac6d3;border-right:1px solid #bac6d3"></div>
<div class="t" style="left:656px;top:678.83px;font-size:12.6px;">1011110000</div>
<div class="t" style="left:1024px;top:678.83px;font-size:12.6px;">1011110000</div>
<div class="t" style="left:1393px;top:678.83px;font-size:12.6px;">1011100000</div>
<div class="a" style="left:631px;top:695px;width:20px;height:18px;background:linear-gradient(#dfe2e6,#cfd4da);border:1px solid #b9c1ca;border-top-color:#eceef1;border-left-color:#e6e9ec;border-radius:2px"></div>
<div class="a" style="left:651px;top:695px;width:370px;height:19px;background:#c9e2e2;border-bottom:1px solid #bac6d3;border-right:1px solid #bac6d3"></div>
<div class="a" style="left:1021px;top:695px;width:370px;height:19px;background:#cbe3e3;border-bottom:1px solid #bac6d3;border-right:1px solid #bac6d3"></div>
<div class="a" style="left:1391px;top:695px;width:153px;height:19px;background:#fefcc6;border-bottom:1px solid #bac6d3;border-right:1px solid #bac6d3"></div>
<div class="t" style="left:656px;top:697.83px;font-size:12.6px;">1011120000</div>
<div class="t" style="left:1024px;top:697.83px;font-size:12.6px;">1011120000</div>
<div class="t" style="left:1393px;top:697.83px;font-size:12.6px;">1011100000</div>
<div class="a" style="left:631px;top:714px;width:20px;height:18px;background:linear-gradient(#dfe2e6,#cfd4da);border:1px solid #b9c1ca;border-top-color:#eceef1;border-left-color:#e6e9ec;border-radius:2px"></div>
<div class="a" style="left:651px;top:714px;width:370px;height:19px;background:#c9e2e2;border-bottom:1px solid #bac6d3;border-right:1px solid #bac6d3"></div>
<div class="a" style="left:1021px;top:714px;width:370px;height:19px;background:#cbe3e3;border-bottom:1px solid #bac6d3;border-right:1px solid #bac6d3"></div>
<div class="a" style="left:1391px;top:714px;width:153px;height:19px;background:#fefcc6;border-bottom:1px solid #bac6d3;border-right:1px solid #bac6d3"></div>
<div class="t" style="left:656px;top:716.83px;font-size:12.6px;">1011130000</div>
<div class="t" style="left:1024px;top:716.83px;font-size:12.6px;">1011130000</div>
<div class="t" style="left:1393px;top:716.83px;font-size:12.6px;">1011100000</div>
<div class="a" style="left:631px;top:733px;width:20px;height:18px;background:linear-gradient(#dfe2e6,#cfd4da);border:1px solid #b9c1ca;border-top-color:#eceef1;border-left-color:#e6e9ec;border-radius:2px"></div>
<div class="a" style="left:651px;top:733px;width:370px;height:19px;background:#c9e2e2;border-bottom:1px solid #bac6d3;border-right:1px solid #bac6d3"></div>
<div class="a" style="left:1021px;top:733px;width:370px;height:19px;background:#cbe3e3;border-bottom:1px solid #bac6d3;border-right:1px solid #bac6d3"></div>
<div class="a" style="left:1391px;top:733px;width:153px;height:19px;background:#fefcc6;border-bottom:1px solid #bac6d3;border-right:1px solid #bac6d3"></div>
<div class="t" style="left:656px;top:735.83px;font-size:12.6px;">1011200000</div>
<div class="t" style="left:1024px;top:735.83px;font-size:12.6px;">1011200000</div>
<div class="t" style="left:1393px;top:735.83px;font-size:12.6px;">1011200000</div>
<div class="a" style="left:631px;top:752px;width:20px;height:18px;background:linear-gradient(#dfe2e6,#cfd4da);border:1px solid #b9c1ca;border-top-color:#eceef1;border-left-color:#e6e9ec;border-radius:2px"></div>
<div class="a" style="left:651px;top:752px;width:370px;height:19px;background:#c9e2e2;border-bottom:1px solid #bac6d3;border-right:1px solid #bac6d3"></div>
<div class="a" style="left:1021px;top:752px;width:370px;height:19px;background:#cbe3e3;border-bottom:1px solid #bac6d3;border-right:1px solid #bac6d3"></div>
<div class="a" style="left:1391px;top:752px;width:153px;height:19px;background:#fefcc6;border-bottom:1px solid #bac6d3;border-right:1px solid #bac6d3"></div>
<div class="t" style="left:656px;top:754.83px;font-size:12.6px;">1011210000</div>
<div class="t" style="left:1024px;top:754.83px;font-size:12.6px;">1011210000</div>
<div class="t" style="left:1393px;top:754.83px;font-size:12.6px;">1011200000</div>
<div class="a" style="left:631px;top:771px;width:20px;height:18px;background:linear-gradient(#dfe2e6,#cfd4da);border:1px solid #b9c1ca;border-top-color:#eceef1;border-left-color:#e6e9ec;border-radius:2px"></div>
<div class="a" style="left:651px;top:771px;width:370px;height:19px;background:#c9e2e2;border-bottom:1px solid #bac6d3;border-right:1px solid #bac6d3"></div>
<div class="a" style="left:1021px;top:771px;width:370px;height:19px;background:#cbe3e3;border-bottom:1px solid #bac6d3;border-right:1px solid #bac6d3"></div>
<div class="a" style="left:1391px;top:771px;width:153px;height:19px;background:#fefcc6;border-bottom:1px solid #bac6d3;border-right:1px solid #bac6d3"></div>
<div class="t" style="left:656px;top:773.83px;font-size:12.6px;">1011300000</div>
<div class="t" style="left:1024px;top:773.83px;font-size:12.6px;">1011300000</div>
<div class="t" style="left:1393px;top:773.83px;font-size:12.6px;">1011300000</div>
<div class="a" style="left:631px;top:790px;width:20px;height:18px;background:linear-gradient(#dfe2e6,#cfd4da);border:1px solid #b9c1ca;border-top-color:#eceef1;border-left-color:#e6e9ec;border-radius:2px"></div>
<div class="a" style="left:651px;top:790px;width:370px;height:19px;background:#c9e2e2;border-bottom:1px solid #bac6d3;border-right:1px solid #bac6d3"></div>
<div class="a" style="left:1021px;top:790px;width:370px;height:19px;background:#cbe3e3;border-bottom:1px solid #bac6d3;border-right:1px solid #bac6d3"></div>
<div class="a" style="left:1391px;top:790px;width:153px;height:19px;background:#fefcc6;border-bottom:1px solid #bac6d3;border-right:1px solid #bac6d3"></div>
<div class="t" style="left:656px;top:792.83px;font-size:12.6px;">1011310000</div>
<div class="t" style="left:1024px;top:792.83px;font-size:12.6px;">1011310000</div>
<div class="t" style="left:1393px;top:792.83px;font-size:12.6px;">1011300000</div>
<div class="a" style="left:631px;top:809px;width:20px;height:18px;background:linear-gradient(#dfe2e6,#cfd4da);border:1px solid #b9c1ca;border-top-color:#eceef1;border-left-color:#e6e9ec;border-radius:2px"></div>
<div class="a" style="left:651px;top:809px;width:370px;height:19px;background:#c9e2e2;border-bottom:1px solid #bac6d3;border-right:1px solid #bac6d3"></div>
<div class="a" style="left:1021px;top:809px;width:370px;height:19px;background:#cbe3e3;border-bottom:1px solid #bac6d3;border-right:1px solid #bac6d3"></div>
<div class="a" style="left:1391px;top:809px;width:153px;height:19px;background:#fefcc6;border-bottom:1px solid #bac6d3;border-right:1px solid #bac6d3"></div>
<div class="t" style="left:656px;top:811.83px;font-size:12.6px;">1011320000</div>
<div class="t" style="left:1024px;top:811.83px;font-size:12.6px;">1011320000</div>
<div class="t" style="left:1393px;top:811.83px;font-size:12.6px;">1011300000</div>
<div class="a" style="left:631px;top:828px;width:20px;height:18px;background:linear-gradient(#dfe2e6,#cfd4da);border:1px solid #b9c1ca;border-top-color:#eceef1;border-left-color:#e6e9ec;border-radius:2px"></div>
<div class="a" style="left:651px;top:828px;width:370px;height:19px;background:#c9e2e2;border-bottom:1px solid #bac6d3;border-right:1px solid #bac6d3"></div>
<div class="a" style="left:1021px;top:828px;width:370px;height:19px;background:#cbe3e3;border-bottom:1px solid #bac6d3;border-right:1px solid #bac6d3"></div>
<div class="a" style="left:1391px;top:828px;width:153px;height:19px;background:#fefcc6;border-bottom:1px solid #bac6d3;border-right:1px solid #bac6d3"></div>
<div class="t" style="left:656px;top:830.83px;font-size:12.6px;">1011330000</div>
<div class="t" style="left:1024px;top:830.83px;font-size:12.6px;">1011330000</div>
<div class="t" style="left:1393px;top:830.83px;font-size:12.6px;">1011300000</div>
<div class="a" style="left:631px;top:847px;width:20px;height:18px;background:linear-gradient(#dfe2e6,#cfd4da);border:1px solid #b9c1ca;border-top-color:#eceef1;border-left-color:#e6e9ec;border-radius:2px"></div>
<div class="a" style="left:651px;top:847px;width:370px;height:19px;background:#c9e2e2;border-bottom:1px solid #bac6d3;border-right:1px solid #bac6d3"></div>
<div class="a" style="left:1021px;top:847px;width:370px;height:19px;background:#cbe3e3;border-bottom:1px solid #bac6d3;border-right:1px solid #bac6d3"></div>
<div class="a" style="left:1391px;top:847px;width:153px;height:19px;background:#fefcc6;border-bottom:1px solid #bac6d3;border-right:1px solid #bac6d3"></div>
<div class="t" style="left:656px;top:849.83px;font-size:12.6px;">1011400000</div>
<div class="t" style="left:1024px;top:849.83px;font-size:12.6px;">1011400000</div>
<div class="t" style="left:1393px;top:849.83px;font-size:12.6px;">1011400000</div>
<div class="a" style="left:631px;top:866px;width:20px;height:18px;background:linear-gradient(#dfe2e6,#cfd4da);border:1px solid #b9c1ca;border-top-color:#eceef1;border-left-color:#e6e9ec;border-radius:2px"></div>
<div class="a" style="left:651px;top:866px;width:370px;height:19px;background:#c9e2e2;border-bottom:1px solid #bac6d3;border-right:1px solid #bac6d3"></div>
<div class="a" style="left:1021px;top:866px;width:370px;height:19px;background:#cbe3e3;border-bottom:1px solid #bac6d3;border-right:1px solid #bac6d3"></div>
<div class="a" style="left:1391px;top:866px;width:153px;height:19px;background:#fefcc6;border-bottom:1px solid #bac6d3;border-right:1px solid #bac6d3"></div>
<div class="t" style="left:656px;top:868.83px;font-size:12.6px;">1011410000</div>
<div class="t" style="left:1024px;top:868.83px;font-size:12.6px;">1011410000</div>
<div class="t" style="left:1393px;top:868.83px;font-size:12.6px;">1011400000</div>
<div class="a" style="left:631px;top:885px;width:20px;height:18px;background:linear-gradient(#dfe2e6,#cfd4da);border:1px solid #b9c1ca;border-top-color:#eceef1;border-left-color:#e6e9ec;border-radius:2px"></div>
<div class="a" style="left:651px;top:885px;width:370px;height:19px;background:#c9e2e2;border-bottom:1px solid #bac6d3;border-right:1px solid #bac6d3"></div>
<div class="a" style="left:1021px;top:885px;width:370px;height:19px;background:#cbe3e3;border-bottom:1px solid #bac6d3;border-right:1px solid #bac6d3"></div>
<div class="a" style="left:1391px;top:885px;width:153px;height:19px;background:#fefcc6;border-bottom:1px solid #bac6d3;border-right:1px solid #bac6d3"></div>
<div class="t" style="left:656px;top:887.83px;font-size:12.6px;">1011420000</div>
<div class="t" style="left:1024px;top:887.83px;font-size:12.6px;">1011420000</div>
<div class="t" style="left:1393px;top:887.83px;font-size:12.6px;">1011400000</div>
<div class="a" style="left:631px;top:904px;width:20px;height:18px;background:linear-gradient(#dfe2e6,#cfd4da);border:1px solid #b9c1ca;border-top-color:#eceef1;border-left-color:#e6e9ec;border-radius:2px"></div>
<div class="a" style="left:651px;top:904px;width:370px;height:19px;background:#c9e2e2;border-bottom:1px solid #bac6d3;border-right:1px solid #bac6d3"></div>
<div class="a" style="left:1021px;top:904px;width:370px;height:19px;background:#cbe3e3;border-bottom:1px solid #bac6d3;border-right:1px solid #bac6d3"></div>
<div class="a" style="left:1391px;top:904px;width:153px;height:19px;background:#fefcc6;border-bottom:1px solid #bac6d3;border-right:1px solid #bac6d3"></div>
<div class="t" style="left:656px;top:906.83px;font-size:12.6px;">1011430000</div>
<div class="t" style="left:1024px;top:906.83px;font-size:12.6px;">1011430000</div>
<div class="t" style="left:1393px;top:906.83px;font-size:12.6px;">1011400000</div>
<div class="a" style="left:631px;top:923px;width:20px;height:18px;background:linear-gradient(#dfe2e6,#cfd4da);border:1px solid #b9c1ca;border-top-color:#eceef1;border-left-color:#e6e9ec;border-radius:2px"></div>
<div class="a" style="left:651px;top:923px;width:370px;height:19px;background:#c9e2e2;border-bottom:1px solid #bac6d3;border-right:1px solid #bac6d3"></div>
<div class="a" style="left:1021px;top:923px;width:370px;height:19px;background:#cbe3e3;border-bottom:1px solid #bac6d3;border-right:1px solid #bac6d3"></div>
<div class="a" style="left:1391px;top:923px;width:153px;height:19px;background:#fefcc6;border-bottom:1px solid #bac6d3;border-right:1px solid #bac6d3"></div>
<div class="t" style="left:656px;top:925.83px;font-size:12.6px;">1012000000</div>
<div class="t" style="left:1024px;top:925.83px;font-size:12.6px;">1012000000</div>
<div class="t" style="left:1393px;top:925.83px;font-size:12.6px;">1012000000</div>
<div class="a" style="left:1366px;top:0;width:199px;height:328px;background:#000"></div>
<div class="a" style="left:0;top:930px;width:629px;height:3px;background:#000"></div>
<div class="red" style="left:63px;top:448px;width:53px;height:37px"></div>
<div class="red" style="left:278px;top:453px;width:285px;height:28px"></div>
<div class="red" style="left:31px;top:803px;width:112px;height:33px"></div>
<div class="red" style="left:653px;top:573px;width:895px;height:348px"></div>
<svg style="left:0;top:0;filter:drop-shadow(2px 3px 2px rgba(0,0,0,.35))" width="1565" height="933" viewBox="0 0 1565 933"><path d="M93 489V793" stroke="#ff3b3b" stroke-width="3" stroke-linecap="round"/><path d="M88.5 792H97.5L93 801Z" fill="#ff3b3b"/><path d="M159 815H639" stroke="#ff3b3b" stroke-width="3" stroke-linecap="round"/><path d="M638 810.5V819.5L647.5 815Z" fill="#ff3b3b"/></svg>
</body></html>
